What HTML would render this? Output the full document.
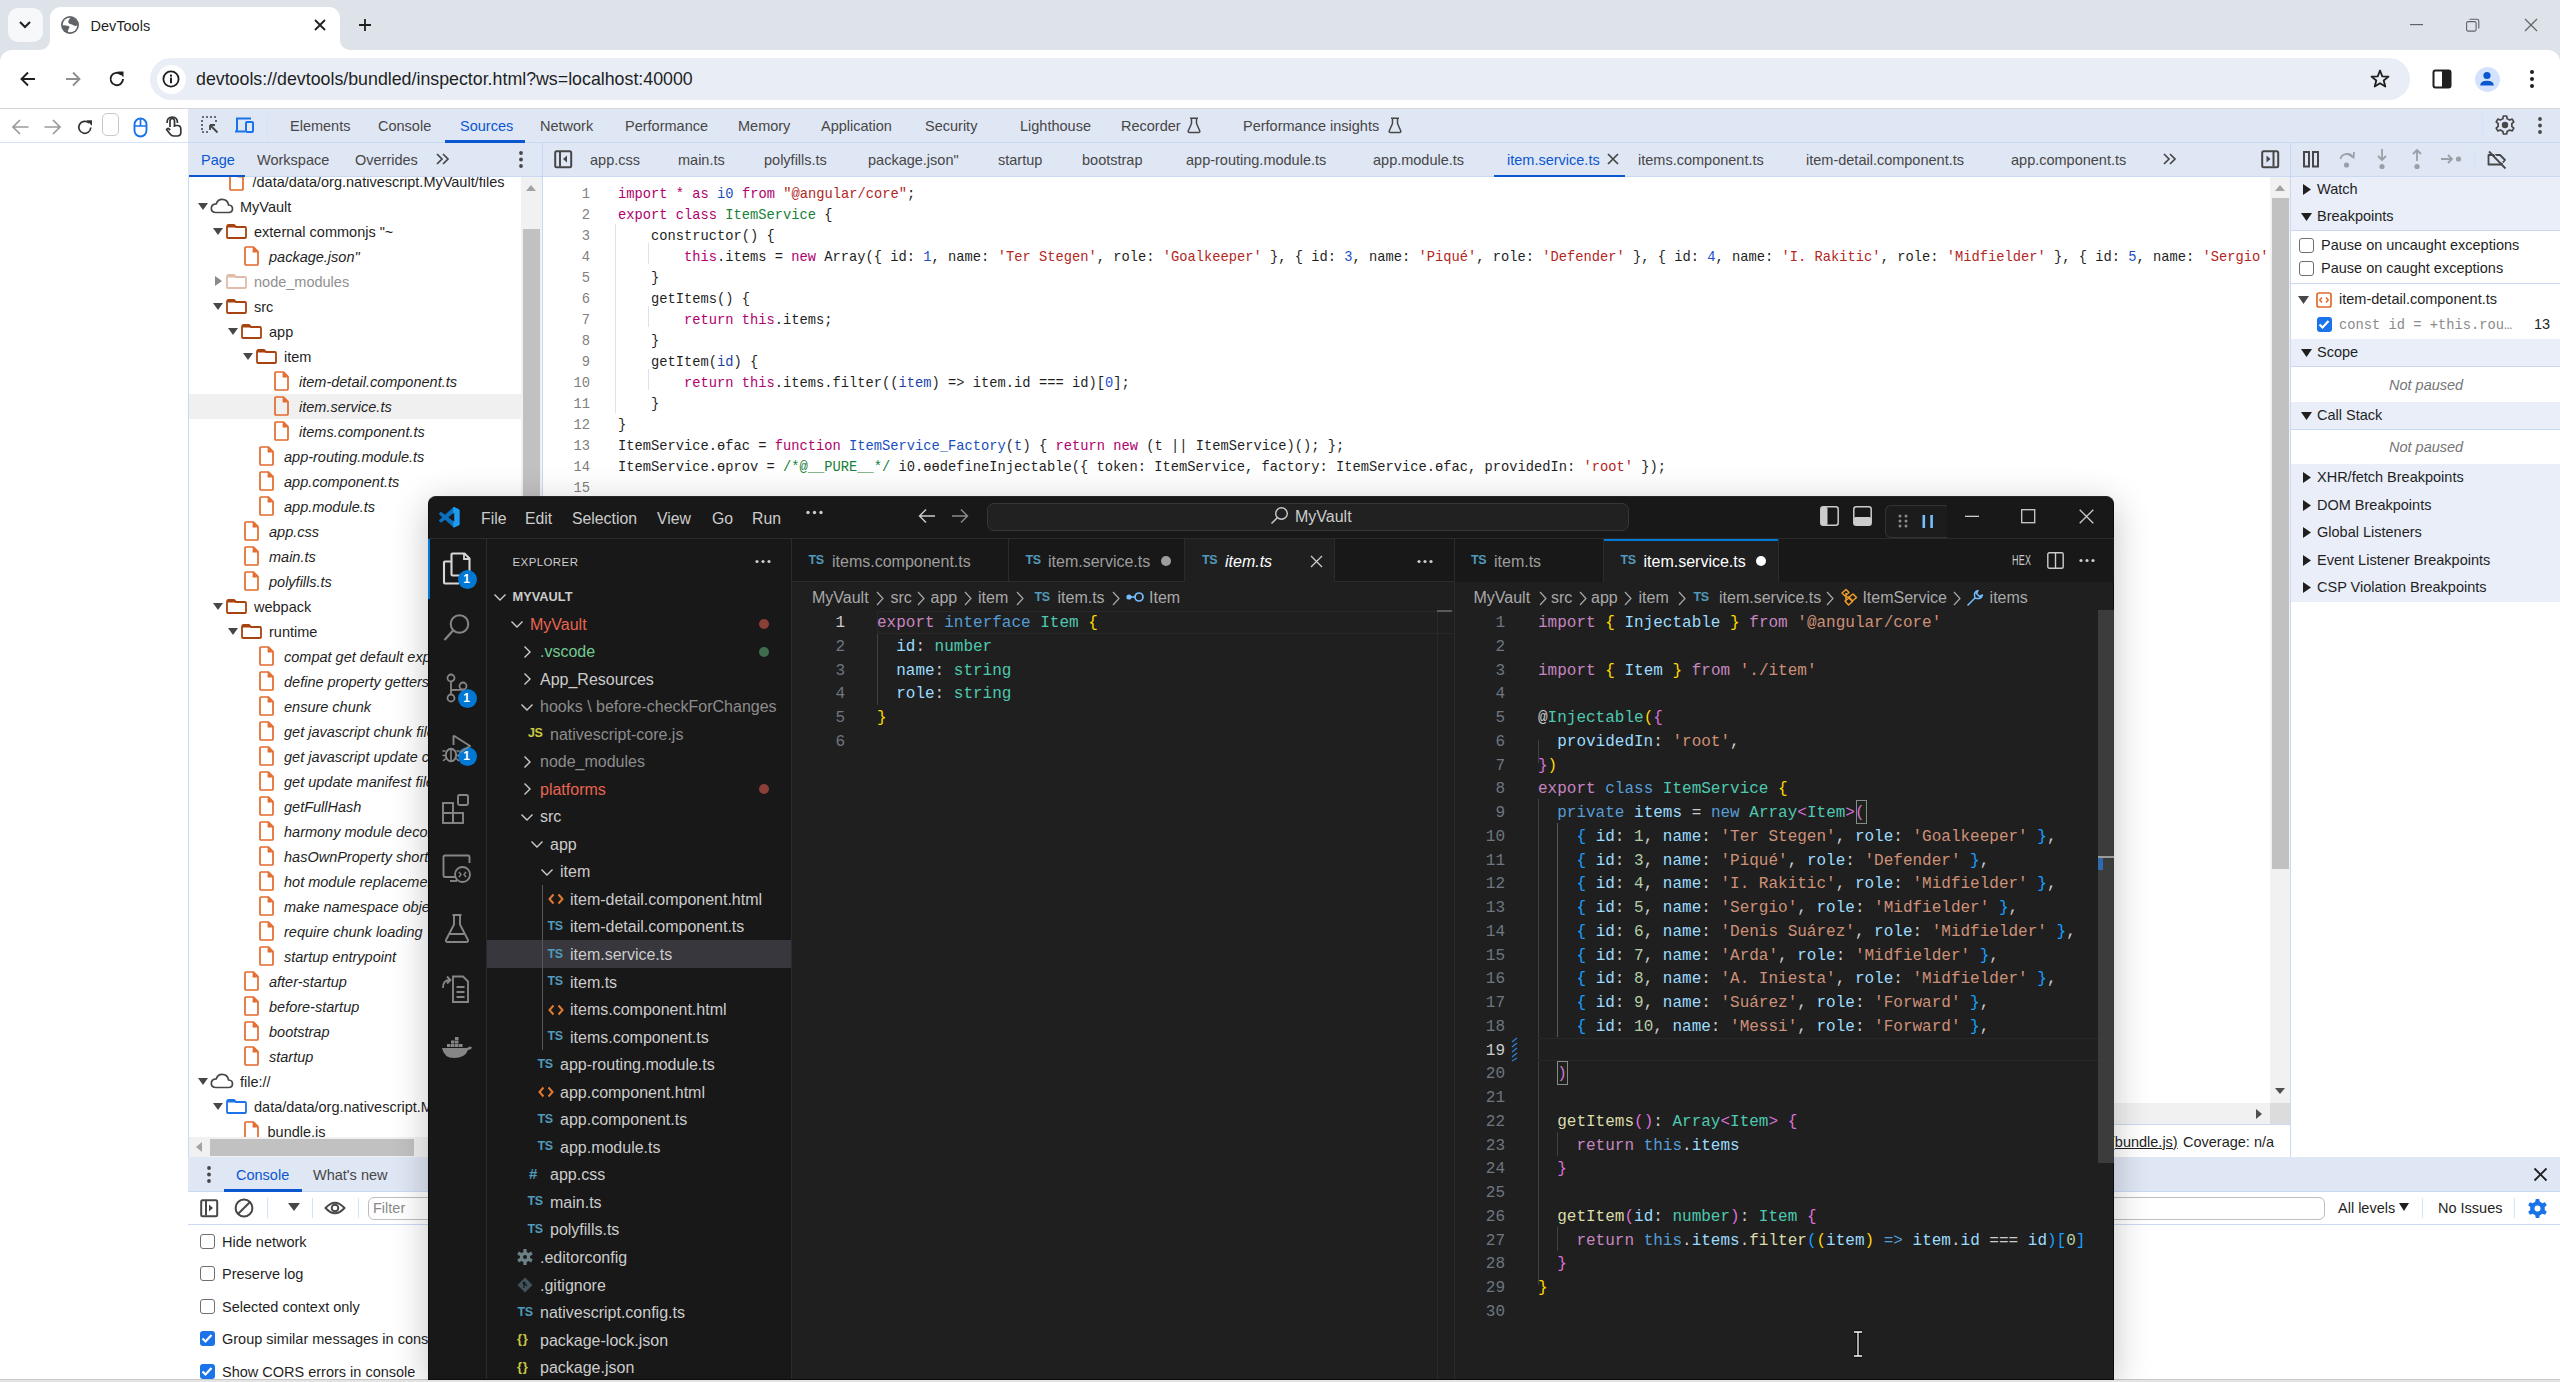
<!DOCTYPE html><html><head><meta charset="utf-8"><style>
html,body{margin:0;padding:0;width:2560px;height:1382px;overflow:hidden;background:#fff;position:relative}
.a{position:absolute;box-sizing:border-box}
svg.a{overflow:visible}
.t{position:absolute;white-space:pre;}
</style></head><body>
<div class="a" style="left:0px;top:0px;width:2560px;height:62px;background:#dee3ea;"></div>
<div class="a" style="left:0px;top:50px;width:2560px;height:58px;background:#fff;border-radius:12px 12px 0 0;"></div>
<div class="a" style="left:40px;top:40px;width:320px;height:10px;background:#fff;"></div>
<div class="a" style="left:30px;top:30px;width:20px;height:20px;background:#dee3ea;border-bottom-right-radius:10px;"></div>
<div class="a" style="left:340px;top:30px;width:20px;height:20px;background:#dee3ea;border-bottom-left-radius:10px;"></div>
<div class="a" style="left:8px;top:8px;width:35px;height:34px;background:#f7f8fa;border-radius:10px;"></div>
<svg class="a" style="left:17px;top:18px;" width="16" height="14" viewBox="0 0 16 14"><path d="M3 4 L8 9 L13 4" fill="none" stroke="#1f1f1f" stroke-width="2"/></svg>
<div class="a" style="left:50px;top:7px;width:290px;height:43px;background:#fff;border-radius:11px 11px 0 0;"></div>
<svg class="a" style="left:61px;top:16px;" width="18" height="18" viewBox="0 0 18 18"><circle cx="9" cy="9" r="9" fill="#5f6368"/><circle cx="9" cy="9" r="7.3" fill="#fff"/><path d="M10 1.5 C8.3 2.8 7 4.8 7.3 6.3 C7.7 8 10 8.2 11.5 8.7 C12.8 9.2 13.5 10 14.3 9.9 C15.2 9.8 16 9.4 16.6 9.2 L16.6 9 A7.6 7.6 0 0 0 10 1.4 Z" fill="#5f6368"/><path d="M1.4 9.2 C3.5 9.2 6 9.3 7.8 10.3 C8.8 11 8.6 12.2 7.6 13 C6.8 13.8 6.8 15 7.3 16.6 A7.6 7.6 0 0 1 1.4 9.2 Z" fill="#5f6368"/></svg>
<div class="t " style="left:90.5px;top:14.80px;height:23px;line-height:23px;font-size:14.5px;color:#1f1f1f;font-family:'Liberation Sans',sans-serif;">DevTools</div>
<svg class="a" style="left:313px;top:18px;" width="14" height="14" viewBox="0 0 14 14"><path d="M2 2 L12 12 M12 2 L2 12" stroke="#1f1f1f" stroke-width="1.8"/></svg>
<svg class="a" style="left:358px;top:18px;" width="14" height="14" viewBox="0 0 14 14"><path d="M7 1 V13 M1 7 H13" stroke="#1f1f1f" stroke-width="1.8"/></svg>
<svg class="a" style="left:2410px;top:24px;" width="14" height="2" viewBox="0 0 14 2"><rect width="13" height="1.2" fill="#5f6368"/></svg>
<svg class="a" style="left:2466px;top:18px;" width="14" height="14" viewBox="0 0 14 14"><rect x="0.6" y="3.6" width="9.5" height="9.5" rx="1.5" fill="none" stroke="#5f6368" stroke-width="1.1"/><path d="M3.5 1.2 H11 Q12.8 1.2 12.8 3 V10.5" fill="none" stroke="#5f6368" stroke-width="1.1"/></svg>
<svg class="a" style="left:2524px;top:18px;" width="14" height="14" viewBox="0 0 14 14"><path d="M1 1 L13 13 M13 1 L1 13" stroke="#5f6368" stroke-width="1.2"/></svg>
<svg class="a" style="left:19px;top:70px;" width="18" height="18" viewBox="0 0 18 18"><path d="M16 9 H3 M9 2.5 L2.5 9 L9 15.5" fill="none" stroke="#1f1f1f" stroke-width="1.9"/></svg>
<svg class="a" style="left:64px;top:70px;" width="18" height="18" viewBox="0 0 18 18"><path d="M2 9 H15 M9 2.5 L15.5 9 L9 15.5" fill="none" stroke="#8f8f8f" stroke-width="1.9"/></svg>
<svg class="a" style="left:108px;top:70px;" width="18" height="18" viewBox="0 0 18 18"><path d="M15 9 A6.2 6.2 0 1 1 13.2 4.6" fill="none" stroke="#1f1f1f" stroke-width="1.9"/><path d="M9.8 1.5 H15.5 V7.2 Z" fill="#1f1f1f"/></svg>
<div class="a" style="left:150px;top:58px;width:2260px;height:42px;background:#e9eef6;border-radius:21px;"></div>
<div class="a" style="left:156.5px;top:64.5px;width:29px;height:29px;background:#fff;border-radius:50%;"></div>
<svg class="a" style="left:162px;top:70px;" width="18" height="18" viewBox="0 0 18 18"><circle cx="9" cy="9" r="7.6" fill="none" stroke="#1f1f1f" stroke-width="1.8"/><rect x="8" y="7.6" width="2" height="5.6" fill="#1f1f1f"/><rect x="8" y="4.6" width="2" height="2" fill="#1f1f1f"/></svg>
<div class="t " style="left:196px;top:65.00px;height:28px;line-height:28px;font-size:17.8px;color:#1f1f1f;font-family:'Liberation Sans',sans-serif;">devtools://devtools/bundled/inspector.html?ws=localhost:40000</div>
<svg class="a" style="left:2369px;top:68px;" width="22" height="22" viewBox="0 0 22 22"><path d="M11 2.5 L13.3 8.3 L19.5 8.6 L14.7 12.5 L16.3 18.6 L11 15.2 L5.7 18.6 L7.3 12.5 L2.5 8.6 L8.7 8.3 Z" fill="none" stroke="#1f1f1f" stroke-width="1.8" stroke-linejoin="round"/></svg>
<svg class="a" style="left:2432px;top:69px;" width="20" height="20" viewBox="0 0 20 20"><rect x="1.5" y="1.5" width="17" height="17" rx="2" fill="none" stroke="#1f1f1f" stroke-width="2"/><rect x="10" y="1.5" width="8.5" height="17" fill="#1f1f1f"/></svg>
<div class="a" style="left:2474.5px;top:66.5px;width:25px;height:25px;background:#d3e3fd;border-radius:50%;"></div>
<svg class="a" style="left:2478px;top:70px;" width="18" height="18" viewBox="0 0 18 18"><circle cx="9" cy="5.5" r="3.6" fill="#0b57d0"/><path d="M2.2 15.5 Q2.2 10.8 9 10.8 Q15.8 10.8 15.8 15.5 Z" fill="#0b57d0"/></svg>
<svg class="a" style="left:2528px;top:69px;" width="8" height="20" viewBox="0 0 8 20"><circle cx="4" cy="3" r="2" fill="#1f1f1f"/><circle cx="4" cy="10" r="2" fill="#1f1f1f"/><circle cx="4" cy="17" r="2" fill="#1f1f1f"/></svg>
<div class="a" style="left:0px;top:108px;width:2560px;height:1px;background:#d6d6d6;"></div>
<div class="a" style="left:0px;top:109px;width:188px;height:33px;background:#fff;"></div>
<div class="a" style="left:0px;top:142px;width:188px;height:1px;background:#d3e3fd;"></div>
<svg class="a" style="left:11px;top:118px;" width="19" height="18" viewBox="0 0 19 18"><path d="M17.5 9 H2.5 M9 2 L2 9 L9 16" fill="none" stroke="#9a9a9a" stroke-width="1.7"/></svg>
<svg class="a" style="left:43px;top:118px;" width="19" height="18" viewBox="0 0 19 18"><path d="M1.5 9 H16.5 M10 2 L17 9 L10 16" fill="none" stroke="#9a9a9a" stroke-width="1.7"/></svg>
<svg class="a" style="left:76px;top:118px;" width="18" height="18" viewBox="0 0 18 18"><path d="M14.8 9.5 A6 6 0 1 1 13 5" fill="none" stroke="#333" stroke-width="1.7"/><path d="M10.3 2.2 H16 V7.8 Z" fill="#333"/></svg>
<div class="a" style="left:102px;top:113px;width:17px;height:23px;border:1px solid #c8c8c8;border-radius:5px;"></div>
<svg class="a" style="left:133px;top:117px;" width="16" height="22" viewBox="0 0 16 22"><rect x="1.5" y="1.5" width="12" height="18" rx="6" fill="none" stroke="#1a73e8" stroke-width="1.9"/><path d="M7.5 2 V9 M2 9 H13" stroke="#1a73e8" stroke-width="1.7"/></svg>
<svg class="a" style="left:163px;top:116px;" width="20" height="22" viewBox="0 0 20 22"><path d="M7 11 V5 Q7 2.5 9.3 2.5 Q11.5 2.5 11.5 5 V11 M11.5 9.5 H14.5 Q17.8 9.5 17.8 13 V16.5 Q17.8 20 14.3 20 H10.5 Q8.5 20 7.3 18.3 L3.5 13.5 L5.3 12.3 L7.2 14 M4 7 Q4 1 9.3 1 Q14.5 1 14.5 7" fill="none" stroke="#333" stroke-width="1.7" stroke-linejoin="round"/></svg>
<div class="a" style="left:188px;top:109px;width:2372px;height:34px;background:#dfe6f4;"></div>
<div class="a" style="left:188px;top:142px;width:2372px;height:1px;background:#cad9f3;"></div>
<svg class="a" style="left:201px;top:116px;" width="19" height="19" viewBox="0 0 19 19"><path d="M1 1 H3 M5 1 H7 M9 1 H11 M13 1 H15 M1 4 V6 M1 8 V10 M1 12 V14 M15 4 V6 M1 16 H3 M5 16 H7" stroke="#474747" stroke-width="1.6"/><path d="M9 9 L16.5 16.5 M9 9 H14 M9 9 V14" fill="none" stroke="#474747" stroke-width="1.8"/></svg>
<svg class="a" style="left:234px;top:116px;" width="23" height="19" viewBox="0 0 23 19"><path d="M3 15.5 V2.5 H17 M1 15.5 H11" fill="none" stroke="#1a73e8" stroke-width="2"/><rect x="12" y="6" width="7" height="10" rx="1" fill="none" stroke="#1a73e8" stroke-width="2"/></svg>
<div class="a" style="left:267px;top:113px;width:1px;height:26px;background:#d3e3fd;"></div>
<div class="t " style="left:290px;top:115.00px;height:23px;line-height:23px;font-size:14.5px;color:#474747;font-family:'Liberation Sans',sans-serif;">Elements</div>
<div class="t " style="left:378px;top:115.00px;height:23px;line-height:23px;font-size:14.5px;color:#474747;font-family:'Liberation Sans',sans-serif;">Console</div>
<div class="t " style="left:460px;top:115.00px;height:23px;line-height:23px;font-size:14.5px;color:#0b57d0;font-family:'Liberation Sans',sans-serif;">Sources</div>
<div class="t " style="left:540px;top:115.00px;height:23px;line-height:23px;font-size:14.5px;color:#474747;font-family:'Liberation Sans',sans-serif;">Network</div>
<div class="t " style="left:625px;top:115.00px;height:23px;line-height:23px;font-size:14.5px;color:#474747;font-family:'Liberation Sans',sans-serif;">Performance</div>
<div class="t " style="left:738px;top:115.00px;height:23px;line-height:23px;font-size:14.5px;color:#474747;font-family:'Liberation Sans',sans-serif;">Memory</div>
<div class="t " style="left:821px;top:115.00px;height:23px;line-height:23px;font-size:14.5px;color:#474747;font-family:'Liberation Sans',sans-serif;">Application</div>
<div class="t " style="left:925px;top:115.00px;height:23px;line-height:23px;font-size:14.5px;color:#474747;font-family:'Liberation Sans',sans-serif;">Security</div>
<div class="t " style="left:1020px;top:115.00px;height:23px;line-height:23px;font-size:14.5px;color:#474747;font-family:'Liberation Sans',sans-serif;">Lighthouse</div>
<div class="t " style="left:1121px;top:115.00px;height:23px;line-height:23px;font-size:14.5px;color:#474747;font-family:'Liberation Sans',sans-serif;">Recorder</div>
<div class="t " style="left:1243px;top:115.00px;height:23px;line-height:23px;font-size:14.5px;color:#474747;font-family:'Liberation Sans',sans-serif;">Performance insights</div>
<div class="a" style="left:445px;top:140px;width:80px;height:3px;background:#0b57d0;"></div>
<svg class="a" style="left:1187px;top:117px;" width="14" height="17" viewBox="0 0 14 17"><path d="M4.5 1.5 V6.5 L1.2 14 Q1 15.5 2.5 15.5 H11.5 Q13 15.5 12.8 14 L9.5 6.5 V1.5 M3 1.2 H11" fill="none" stroke="#474747" stroke-width="1.5" stroke-linejoin="round"/></svg>
<svg class="a" style="left:1388px;top:117px;" width="14" height="17" viewBox="0 0 14 17"><path d="M4.5 1.5 V6.5 L1.2 14 Q1 15.5 2.5 15.5 H11.5 Q13 15.5 12.8 14 L9.5 6.5 V1.5 M3 1.2 H11" fill="none" stroke="#474747" stroke-width="1.5" stroke-linejoin="round"/></svg>
<div class="a" style="left:2482px;top:113px;width:1px;height:26px;background:#d3e3fd;"></div>
<svg class="a" style="left:2494px;top:114px;" width="22" height="22" viewBox="0 0 22 22"><g transform="translate(11 11)"><path d="M-1.6 -9 H1.6 L2.2 -6.3 Q3.6 -5.8 4.6 -5 L7.2 -5.9 L8.8 -3.1 L6.8 -1.3 Q7 0 6.8 1.3 L8.8 3.1 L7.2 5.9 L4.6 5 Q3.6 5.8 2.2 6.3 L1.6 9 H-1.6 L-2.2 6.3 Q-3.6 5.8 -4.6 5 L-7.2 5.9 L-8.8 3.1 L-6.8 1.3 Q-7 0 -6.8 -1.3 L-8.8 -3.1 L-7.2 -5.9 L-4.6 -5 Q-3.6 -5.8 -2.2 -6.3 Z" fill="none" stroke="#474747" stroke-width="1.7" stroke-linejoin="round"/><circle r="3.2" fill="#474747"/></g></svg>
<svg class="a" style="left:2536px;top:116px;" width="8" height="19" viewBox="0 0 8 19"><circle cx="4" cy="3" r="1.9" fill="#474747"/><circle cx="4" cy="9.5" r="1.9" fill="#474747"/><circle cx="4" cy="16" r="1.9" fill="#474747"/></svg>
<div class="a" style="left:188px;top:143px;width:355px;height:34px;background:#dfe6f4;"></div>
<div class="a" style="left:188px;top:176px;width:2372px;height:1px;background:#cad9f3;"></div>
<div class="a" style="left:542px;top:143px;width:1px;height:1014px;background:#cad9f3;"></div>
<div class="t " style="left:201px;top:148.50px;height:23px;line-height:23px;font-size:14.5px;color:#0b57d0;font-family:'Liberation Sans',sans-serif;">Page</div>
<div class="a" style="left:189px;top:174.8px;width:56px;height:2.2px;background:#0b57d0;"></div>
<div class="t " style="left:257px;top:148.50px;height:23px;line-height:23px;font-size:14.5px;color:#474747;font-family:'Liberation Sans',sans-serif;">Workspace</div>
<div class="t " style="left:355px;top:148.50px;height:23px;line-height:23px;font-size:14.5px;color:#474747;font-family:'Liberation Sans',sans-serif;">Overrides</div>
<svg class="a" style="left:435px;top:152px;" width="16" height="14" viewBox="0 0 16 14"><path d="M2 2 L7 7 L2 12 M8 2 L13 7 L8 12" fill="none" stroke="#474747" stroke-width="1.7"/></svg>
<svg class="a" style="left:517px;top:150px;" width="8" height="19" viewBox="0 0 8 19"><circle cx="4" cy="3" r="1.9" fill="#474747"/><circle cx="4" cy="9.5" r="1.9" fill="#474747"/><circle cx="4" cy="16" r="1.9" fill="#474747"/></svg>
<div class="a" style="left:188px;top:177px;width:354px;height:980px;background:#fff;"></div>
<div class="a" style="left:188px;top:177px;width:1px;height:980px;background:#cad9f3;"></div>
<div class="a" style="left:189px;top:393.5px;width:332px;height:25px;background:#f0f0f0;"></div>
<div class="a" style="left:189px;top:177px;width:332px;height:960px;overflow:hidden">
<svg class="a" style="left:39.5px;top:-6.5px;" width="15" height="20" viewBox="0 0 15 20"><path d="M1 2 Q1 1 2 1 H9.5 L14 5.5 V18 Q14 19 13 19 H2 Q1 19 1 18 Z" fill="none" stroke="#e36a2c" stroke-width="1.7" stroke-linejoin="round"/><path d="M8.6 1 V6.4 H14 Z" fill="#e36a2c"/></svg>
<div class="t " style="left:63.5px;top:-6.50px;height:23px;line-height:23px;font-size:14.5px;color:#1f1f1f;font-family:'Liberation Sans',sans-serif;">/data/data/org.nativescript.MyVault/files</div>
<svg class="a" style="left:9px;top:25.5px;" width="10" height="7" viewBox="0 0 10 7"><path d="M0 0 H10 L5 7 Z" fill="#474747"/></svg>
<svg class="a" style="left:21px;top:20.5px;" width="24" height="16" viewBox="0 0 24 16"><path d="M6 14.5 H18.5 Q22.5 14.5 22.5 10.8 Q22.5 7.2 18.6 7 Q17.5 1.3 12 1.3 Q7.7 1.3 6.3 5.8 Q1.3 6.2 1.3 10.2 Q1.3 14.5 6 14.5 Z" fill="none" stroke="#474747" stroke-width="1.7"/></svg>
<div class="t " style="left:51px;top:18.50px;height:23px;line-height:23px;font-size:14.5px;color:#1f1f1f;font-family:'Liberation Sans',sans-serif;">MyVault</div>
<svg class="a" style="left:24px;top:50.5px;" width="10" height="7" viewBox="0 0 10 7"><path d="M0 0 H10 L5 7 Z" fill="#474747"/></svg>
<svg class="a" style="left:37px;top:46.5px;" width="21" height="15" viewBox="0 0 21 15"><g opacity="1"><path d="M1 3 Q1 1 2.5 1 H8 L10 3 H19 Q20 3 20 4.5 V13 Q20 14 19 14 H2 Q1 14 1 13 Z" fill="none" stroke="#a8420f" stroke-width="1.8" stroke-linejoin="round"/><path d="M1 1 H8 L10 3.4 H1 Z" fill="#a8420f"/></g></svg>
<div class="t " style="left:65px;top:43.50px;height:23px;line-height:23px;font-size:14.5px;color:#1f1f1f;font-family:'Liberation Sans',sans-serif;">external commonjs "~</div>
<svg class="a" style="left:54.5px;top:68.5px;" width="15" height="20" viewBox="0 0 15 20"><path d="M1 2 Q1 1 2 1 H9.5 L14 5.5 V18 Q14 19 13 19 H2 Q1 19 1 18 Z" fill="none" stroke="#e36a2c" stroke-width="1.7" stroke-linejoin="round"/><path d="M8.6 1 V6.4 H14 Z" fill="#e36a2c"/></svg>
<div class="t " style="left:80.0px;top:68.50px;height:23px;line-height:23px;font-size:14.5px;color:#1f1f1f;font-family:'Liberation Sans',sans-serif;font-style:italic;">package.json"</div>
<svg class="a" style="left:26px;top:99px;" width="7" height="10" viewBox="0 0 7 10"><path d="M0 0 V10 L7 5 Z" fill="#8a8a8a"/></svg>
<svg class="a" style="left:37px;top:96.5px;" width="21" height="15" viewBox="0 0 21 15"><g opacity="0.35"><path d="M1 3 Q1 1 2.5 1 H8 L10 3 H19 Q20 3 20 4.5 V13 Q20 14 19 14 H2 Q1 14 1 13 Z" fill="none" stroke="#a8420f" stroke-width="1.8" stroke-linejoin="round"/><path d="M1 1 H8 L10 3.4 H1 Z" fill="#a8420f"/></g></svg>
<div class="t " style="left:65px;top:93.50px;height:23px;line-height:23px;font-size:14.5px;color:#8f8f8f;font-family:'Liberation Sans',sans-serif;">node_modules</div>
<svg class="a" style="left:24px;top:125.5px;" width="10" height="7" viewBox="0 0 10 7"><path d="M0 0 H10 L5 7 Z" fill="#474747"/></svg>
<svg class="a" style="left:37px;top:121.5px;" width="21" height="15" viewBox="0 0 21 15"><g opacity="1"><path d="M1 3 Q1 1 2.5 1 H8 L10 3 H19 Q20 3 20 4.5 V13 Q20 14 19 14 H2 Q1 14 1 13 Z" fill="none" stroke="#a8420f" stroke-width="1.8" stroke-linejoin="round"/><path d="M1 1 H8 L10 3.4 H1 Z" fill="#a8420f"/></g></svg>
<div class="t " style="left:65px;top:118.50px;height:23px;line-height:23px;font-size:14.5px;color:#1f1f1f;font-family:'Liberation Sans',sans-serif;">src</div>
<svg class="a" style="left:39px;top:150.5px;" width="10" height="7" viewBox="0 0 10 7"><path d="M0 0 H10 L5 7 Z" fill="#474747"/></svg>
<svg class="a" style="left:52px;top:146.5px;" width="21" height="15" viewBox="0 0 21 15"><g opacity="1"><path d="M1 3 Q1 1 2.5 1 H8 L10 3 H19 Q20 3 20 4.5 V13 Q20 14 19 14 H2 Q1 14 1 13 Z" fill="none" stroke="#a8420f" stroke-width="1.8" stroke-linejoin="round"/><path d="M1 1 H8 L10 3.4 H1 Z" fill="#a8420f"/></g></svg>
<div class="t " style="left:80px;top:143.50px;height:23px;line-height:23px;font-size:14.5px;color:#1f1f1f;font-family:'Liberation Sans',sans-serif;">app</div>
<svg class="a" style="left:54px;top:175.5px;" width="10" height="7" viewBox="0 0 10 7"><path d="M0 0 H10 L5 7 Z" fill="#474747"/></svg>
<svg class="a" style="left:67px;top:171.5px;" width="21" height="15" viewBox="0 0 21 15"><g opacity="1"><path d="M1 3 Q1 1 2.5 1 H8 L10 3 H19 Q20 3 20 4.5 V13 Q20 14 19 14 H2 Q1 14 1 13 Z" fill="none" stroke="#a8420f" stroke-width="1.8" stroke-linejoin="round"/><path d="M1 1 H8 L10 3.4 H1 Z" fill="#a8420f"/></g></svg>
<div class="t " style="left:95px;top:168.50px;height:23px;line-height:23px;font-size:14.5px;color:#1f1f1f;font-family:'Liberation Sans',sans-serif;">item</div>
<svg class="a" style="left:84.5px;top:193.5px;" width="15" height="20" viewBox="0 0 15 20"><path d="M1 2 Q1 1 2 1 H9.5 L14 5.5 V18 Q14 19 13 19 H2 Q1 19 1 18 Z" fill="none" stroke="#e36a2c" stroke-width="1.7" stroke-linejoin="round"/><path d="M8.6 1 V6.4 H14 Z" fill="#e36a2c"/></svg>
<div class="t " style="left:110.0px;top:193.50px;height:23px;line-height:23px;font-size:14.5px;color:#1f1f1f;font-family:'Liberation Sans',sans-serif;font-style:italic;">item-detail.component.ts</div>
<svg class="a" style="left:84.5px;top:218.5px;" width="15" height="20" viewBox="0 0 15 20"><path d="M1 2 Q1 1 2 1 H9.5 L14 5.5 V18 Q14 19 13 19 H2 Q1 19 1 18 Z" fill="none" stroke="#e36a2c" stroke-width="1.7" stroke-linejoin="round"/><path d="M8.6 1 V6.4 H14 Z" fill="#e36a2c"/></svg>
<div class="t " style="left:110.0px;top:218.50px;height:23px;line-height:23px;font-size:14.5px;color:#1f1f1f;font-family:'Liberation Sans',sans-serif;font-style:italic;">item.service.ts</div>
<svg class="a" style="left:84.5px;top:243.5px;" width="15" height="20" viewBox="0 0 15 20"><path d="M1 2 Q1 1 2 1 H9.5 L14 5.5 V18 Q14 19 13 19 H2 Q1 19 1 18 Z" fill="none" stroke="#e36a2c" stroke-width="1.7" stroke-linejoin="round"/><path d="M8.6 1 V6.4 H14 Z" fill="#e36a2c"/></svg>
<div class="t " style="left:110.0px;top:243.50px;height:23px;line-height:23px;font-size:14.5px;color:#1f1f1f;font-family:'Liberation Sans',sans-serif;font-style:italic;">items.component.ts</div>
<svg class="a" style="left:69.5px;top:268.5px;" width="15" height="20" viewBox="0 0 15 20"><path d="M1 2 Q1 1 2 1 H9.5 L14 5.5 V18 Q14 19 13 19 H2 Q1 19 1 18 Z" fill="none" stroke="#e36a2c" stroke-width="1.7" stroke-linejoin="round"/><path d="M8.6 1 V6.4 H14 Z" fill="#e36a2c"/></svg>
<div class="t " style="left:95.0px;top:268.50px;height:23px;line-height:23px;font-size:14.5px;color:#1f1f1f;font-family:'Liberation Sans',sans-serif;font-style:italic;">app-routing.module.ts</div>
<svg class="a" style="left:69.5px;top:293.5px;" width="15" height="20" viewBox="0 0 15 20"><path d="M1 2 Q1 1 2 1 H9.5 L14 5.5 V18 Q14 19 13 19 H2 Q1 19 1 18 Z" fill="none" stroke="#e36a2c" stroke-width="1.7" stroke-linejoin="round"/><path d="M8.6 1 V6.4 H14 Z" fill="#e36a2c"/></svg>
<div class="t " style="left:95.0px;top:293.50px;height:23px;line-height:23px;font-size:14.5px;color:#1f1f1f;font-family:'Liberation Sans',sans-serif;font-style:italic;">app.component.ts</div>
<svg class="a" style="left:69.5px;top:318.5px;" width="15" height="20" viewBox="0 0 15 20"><path d="M1 2 Q1 1 2 1 H9.5 L14 5.5 V18 Q14 19 13 19 H2 Q1 19 1 18 Z" fill="none" stroke="#e36a2c" stroke-width="1.7" stroke-linejoin="round"/><path d="M8.6 1 V6.4 H14 Z" fill="#e36a2c"/></svg>
<div class="t " style="left:95.0px;top:318.50px;height:23px;line-height:23px;font-size:14.5px;color:#1f1f1f;font-family:'Liberation Sans',sans-serif;font-style:italic;">app.module.ts</div>
<svg class="a" style="left:54.5px;top:343.5px;" width="15" height="20" viewBox="0 0 15 20"><path d="M1 2 Q1 1 2 1 H9.5 L14 5.5 V18 Q14 19 13 19 H2 Q1 19 1 18 Z" fill="none" stroke="#e36a2c" stroke-width="1.7" stroke-linejoin="round"/><path d="M8.6 1 V6.4 H14 Z" fill="#e36a2c"/></svg>
<div class="t " style="left:80.0px;top:343.50px;height:23px;line-height:23px;font-size:14.5px;color:#1f1f1f;font-family:'Liberation Sans',sans-serif;font-style:italic;">app.css</div>
<svg class="a" style="left:54.5px;top:368.5px;" width="15" height="20" viewBox="0 0 15 20"><path d="M1 2 Q1 1 2 1 H9.5 L14 5.5 V18 Q14 19 13 19 H2 Q1 19 1 18 Z" fill="none" stroke="#e36a2c" stroke-width="1.7" stroke-linejoin="round"/><path d="M8.6 1 V6.4 H14 Z" fill="#e36a2c"/></svg>
<div class="t " style="left:80.0px;top:368.50px;height:23px;line-height:23px;font-size:14.5px;color:#1f1f1f;font-family:'Liberation Sans',sans-serif;font-style:italic;">main.ts</div>
<svg class="a" style="left:54.5px;top:393.5px;" width="15" height="20" viewBox="0 0 15 20"><path d="M1 2 Q1 1 2 1 H9.5 L14 5.5 V18 Q14 19 13 19 H2 Q1 19 1 18 Z" fill="none" stroke="#e36a2c" stroke-width="1.7" stroke-linejoin="round"/><path d="M8.6 1 V6.4 H14 Z" fill="#e36a2c"/></svg>
<div class="t " style="left:80.0px;top:393.50px;height:23px;line-height:23px;font-size:14.5px;color:#1f1f1f;font-family:'Liberation Sans',sans-serif;font-style:italic;">polyfills.ts</div>
<svg class="a" style="left:24px;top:425.5px;" width="10" height="7" viewBox="0 0 10 7"><path d="M0 0 H10 L5 7 Z" fill="#474747"/></svg>
<svg class="a" style="left:37px;top:421.5px;" width="21" height="15" viewBox="0 0 21 15"><g opacity="1"><path d="M1 3 Q1 1 2.5 1 H8 L10 3 H19 Q20 3 20 4.5 V13 Q20 14 19 14 H2 Q1 14 1 13 Z" fill="none" stroke="#a8420f" stroke-width="1.8" stroke-linejoin="round"/><path d="M1 1 H8 L10 3.4 H1 Z" fill="#a8420f"/></g></svg>
<div class="t " style="left:65px;top:418.50px;height:23px;line-height:23px;font-size:14.5px;color:#1f1f1f;font-family:'Liberation Sans',sans-serif;">webpack</div>
<svg class="a" style="left:39px;top:450.5px;" width="10" height="7" viewBox="0 0 10 7"><path d="M0 0 H10 L5 7 Z" fill="#474747"/></svg>
<svg class="a" style="left:52px;top:446.5px;" width="21" height="15" viewBox="0 0 21 15"><g opacity="1"><path d="M1 3 Q1 1 2.5 1 H8 L10 3 H19 Q20 3 20 4.5 V13 Q20 14 19 14 H2 Q1 14 1 13 Z" fill="none" stroke="#a8420f" stroke-width="1.8" stroke-linejoin="round"/><path d="M1 1 H8 L10 3.4 H1 Z" fill="#a8420f"/></g></svg>
<div class="t " style="left:80px;top:443.50px;height:23px;line-height:23px;font-size:14.5px;color:#1f1f1f;font-family:'Liberation Sans',sans-serif;">runtime</div>
<svg class="a" style="left:69.5px;top:468.5px;" width="15" height="20" viewBox="0 0 15 20"><path d="M1 2 Q1 1 2 1 H9.5 L14 5.5 V18 Q14 19 13 19 H2 Q1 19 1 18 Z" fill="none" stroke="#e36a2c" stroke-width="1.7" stroke-linejoin="round"/><path d="M8.6 1 V6.4 H14 Z" fill="#e36a2c"/></svg>
<div class="t " style="left:95.0px;top:468.50px;height:23px;line-height:23px;font-size:14.5px;color:#1f1f1f;font-family:'Liberation Sans',sans-serif;font-style:italic;">compat get default export</div>
<svg class="a" style="left:69.5px;top:493.5px;" width="15" height="20" viewBox="0 0 15 20"><path d="M1 2 Q1 1 2 1 H9.5 L14 5.5 V18 Q14 19 13 19 H2 Q1 19 1 18 Z" fill="none" stroke="#e36a2c" stroke-width="1.7" stroke-linejoin="round"/><path d="M8.6 1 V6.4 H14 Z" fill="#e36a2c"/></svg>
<div class="t " style="left:95.0px;top:493.50px;height:23px;line-height:23px;font-size:14.5px;color:#1f1f1f;font-family:'Liberation Sans',sans-serif;font-style:italic;">define property getters</div>
<svg class="a" style="left:69.5px;top:518.5px;" width="15" height="20" viewBox="0 0 15 20"><path d="M1 2 Q1 1 2 1 H9.5 L14 5.5 V18 Q14 19 13 19 H2 Q1 19 1 18 Z" fill="none" stroke="#e36a2c" stroke-width="1.7" stroke-linejoin="round"/><path d="M8.6 1 V6.4 H14 Z" fill="#e36a2c"/></svg>
<div class="t " style="left:95.0px;top:518.50px;height:23px;line-height:23px;font-size:14.5px;color:#1f1f1f;font-family:'Liberation Sans',sans-serif;font-style:italic;">ensure chunk</div>
<svg class="a" style="left:69.5px;top:543.5px;" width="15" height="20" viewBox="0 0 15 20"><path d="M1 2 Q1 1 2 1 H9.5 L14 5.5 V18 Q14 19 13 19 H2 Q1 19 1 18 Z" fill="none" stroke="#e36a2c" stroke-width="1.7" stroke-linejoin="round"/><path d="M8.6 1 V6.4 H14 Z" fill="#e36a2c"/></svg>
<div class="t " style="left:95.0px;top:543.50px;height:23px;line-height:23px;font-size:14.5px;color:#1f1f1f;font-family:'Liberation Sans',sans-serif;font-style:italic;">get javascript chunk filename</div>
<svg class="a" style="left:69.5px;top:568.5px;" width="15" height="20" viewBox="0 0 15 20"><path d="M1 2 Q1 1 2 1 H9.5 L14 5.5 V18 Q14 19 13 19 H2 Q1 19 1 18 Z" fill="none" stroke="#e36a2c" stroke-width="1.7" stroke-linejoin="round"/><path d="M8.6 1 V6.4 H14 Z" fill="#e36a2c"/></svg>
<div class="t " style="left:95.0px;top:568.50px;height:23px;line-height:23px;font-size:14.5px;color:#1f1f1f;font-family:'Liberation Sans',sans-serif;font-style:italic;">get javascript update chunk filename</div>
<svg class="a" style="left:69.5px;top:593.5px;" width="15" height="20" viewBox="0 0 15 20"><path d="M1 2 Q1 1 2 1 H9.5 L14 5.5 V18 Q14 19 13 19 H2 Q1 19 1 18 Z" fill="none" stroke="#e36a2c" stroke-width="1.7" stroke-linejoin="round"/><path d="M8.6 1 V6.4 H14 Z" fill="#e36a2c"/></svg>
<div class="t " style="left:95.0px;top:593.50px;height:23px;line-height:23px;font-size:14.5px;color:#1f1f1f;font-family:'Liberation Sans',sans-serif;font-style:italic;">get update manifest filename</div>
<svg class="a" style="left:69.5px;top:618.5px;" width="15" height="20" viewBox="0 0 15 20"><path d="M1 2 Q1 1 2 1 H9.5 L14 5.5 V18 Q14 19 13 19 H2 Q1 19 1 18 Z" fill="none" stroke="#e36a2c" stroke-width="1.7" stroke-linejoin="round"/><path d="M8.6 1 V6.4 H14 Z" fill="#e36a2c"/></svg>
<div class="t " style="left:95.0px;top:618.50px;height:23px;line-height:23px;font-size:14.5px;color:#1f1f1f;font-family:'Liberation Sans',sans-serif;font-style:italic;">getFullHash</div>
<svg class="a" style="left:69.5px;top:643.5px;" width="15" height="20" viewBox="0 0 15 20"><path d="M1 2 Q1 1 2 1 H9.5 L14 5.5 V18 Q14 19 13 19 H2 Q1 19 1 18 Z" fill="none" stroke="#e36a2c" stroke-width="1.7" stroke-linejoin="round"/><path d="M8.6 1 V6.4 H14 Z" fill="#e36a2c"/></svg>
<div class="t " style="left:95.0px;top:643.50px;height:23px;line-height:23px;font-size:14.5px;color:#1f1f1f;font-family:'Liberation Sans',sans-serif;font-style:italic;">harmony module decorator</div>
<svg class="a" style="left:69.5px;top:668.5px;" width="15" height="20" viewBox="0 0 15 20"><path d="M1 2 Q1 1 2 1 H9.5 L14 5.5 V18 Q14 19 13 19 H2 Q1 19 1 18 Z" fill="none" stroke="#e36a2c" stroke-width="1.7" stroke-linejoin="round"/><path d="M8.6 1 V6.4 H14 Z" fill="#e36a2c"/></svg>
<div class="t " style="left:95.0px;top:668.50px;height:23px;line-height:23px;font-size:14.5px;color:#1f1f1f;font-family:'Liberation Sans',sans-serif;font-style:italic;">hasOwnProperty shorthand</div>
<svg class="a" style="left:69.5px;top:693.5px;" width="15" height="20" viewBox="0 0 15 20"><path d="M1 2 Q1 1 2 1 H9.5 L14 5.5 V18 Q14 19 13 19 H2 Q1 19 1 18 Z" fill="none" stroke="#e36a2c" stroke-width="1.7" stroke-linejoin="round"/><path d="M8.6 1 V6.4 H14 Z" fill="#e36a2c"/></svg>
<div class="t " style="left:95.0px;top:693.50px;height:23px;line-height:23px;font-size:14.5px;color:#1f1f1f;font-family:'Liberation Sans',sans-serif;font-style:italic;">hot module replacement</div>
<svg class="a" style="left:69.5px;top:718.5px;" width="15" height="20" viewBox="0 0 15 20"><path d="M1 2 Q1 1 2 1 H9.5 L14 5.5 V18 Q14 19 13 19 H2 Q1 19 1 18 Z" fill="none" stroke="#e36a2c" stroke-width="1.7" stroke-linejoin="round"/><path d="M8.6 1 V6.4 H14 Z" fill="#e36a2c"/></svg>
<div class="t " style="left:95.0px;top:718.50px;height:23px;line-height:23px;font-size:14.5px;color:#1f1f1f;font-family:'Liberation Sans',sans-serif;font-style:italic;">make namespace object</div>
<svg class="a" style="left:69.5px;top:743.5px;" width="15" height="20" viewBox="0 0 15 20"><path d="M1 2 Q1 1 2 1 H9.5 L14 5.5 V18 Q14 19 13 19 H2 Q1 19 1 18 Z" fill="none" stroke="#e36a2c" stroke-width="1.7" stroke-linejoin="round"/><path d="M8.6 1 V6.4 H14 Z" fill="#e36a2c"/></svg>
<div class="t " style="left:95.0px;top:743.50px;height:23px;line-height:23px;font-size:14.5px;color:#1f1f1f;font-family:'Liberation Sans',sans-serif;font-style:italic;">require chunk loading</div>
<svg class="a" style="left:69.5px;top:768.5px;" width="15" height="20" viewBox="0 0 15 20"><path d="M1 2 Q1 1 2 1 H9.5 L14 5.5 V18 Q14 19 13 19 H2 Q1 19 1 18 Z" fill="none" stroke="#e36a2c" stroke-width="1.7" stroke-linejoin="round"/><path d="M8.6 1 V6.4 H14 Z" fill="#e36a2c"/></svg>
<div class="t " style="left:95.0px;top:768.50px;height:23px;line-height:23px;font-size:14.5px;color:#1f1f1f;font-family:'Liberation Sans',sans-serif;font-style:italic;">startup entrypoint</div>
<svg class="a" style="left:54.5px;top:793.5px;" width="15" height="20" viewBox="0 0 15 20"><path d="M1 2 Q1 1 2 1 H9.5 L14 5.5 V18 Q14 19 13 19 H2 Q1 19 1 18 Z" fill="none" stroke="#e36a2c" stroke-width="1.7" stroke-linejoin="round"/><path d="M8.6 1 V6.4 H14 Z" fill="#e36a2c"/></svg>
<div class="t " style="left:80.0px;top:793.50px;height:23px;line-height:23px;font-size:14.5px;color:#1f1f1f;font-family:'Liberation Sans',sans-serif;font-style:italic;">after-startup</div>
<svg class="a" style="left:54.5px;top:818.5px;" width="15" height="20" viewBox="0 0 15 20"><path d="M1 2 Q1 1 2 1 H9.5 L14 5.5 V18 Q14 19 13 19 H2 Q1 19 1 18 Z" fill="none" stroke="#e36a2c" stroke-width="1.7" stroke-linejoin="round"/><path d="M8.6 1 V6.4 H14 Z" fill="#e36a2c"/></svg>
<div class="t " style="left:80.0px;top:818.50px;height:23px;line-height:23px;font-size:14.5px;color:#1f1f1f;font-family:'Liberation Sans',sans-serif;font-style:italic;">before-startup</div>
<svg class="a" style="left:54.5px;top:843.5px;" width="15" height="20" viewBox="0 0 15 20"><path d="M1 2 Q1 1 2 1 H9.5 L14 5.5 V18 Q14 19 13 19 H2 Q1 19 1 18 Z" fill="none" stroke="#e36a2c" stroke-width="1.7" stroke-linejoin="round"/><path d="M8.6 1 V6.4 H14 Z" fill="#e36a2c"/></svg>
<div class="t " style="left:80.0px;top:843.50px;height:23px;line-height:23px;font-size:14.5px;color:#1f1f1f;font-family:'Liberation Sans',sans-serif;font-style:italic;">bootstrap</div>
<svg class="a" style="left:54.5px;top:868.5px;" width="15" height="20" viewBox="0 0 15 20"><path d="M1 2 Q1 1 2 1 H9.5 L14 5.5 V18 Q14 19 13 19 H2 Q1 19 1 18 Z" fill="none" stroke="#e36a2c" stroke-width="1.7" stroke-linejoin="round"/><path d="M8.6 1 V6.4 H14 Z" fill="#e36a2c"/></svg>
<div class="t " style="left:80.0px;top:868.50px;height:23px;line-height:23px;font-size:14.5px;color:#1f1f1f;font-family:'Liberation Sans',sans-serif;font-style:italic;">startup</div>
<svg class="a" style="left:9px;top:900.5px;" width="10" height="7" viewBox="0 0 10 7"><path d="M0 0 H10 L5 7 Z" fill="#474747"/></svg>
<svg class="a" style="left:21px;top:895.5px;" width="24" height="16" viewBox="0 0 24 16"><path d="M6 14.5 H18.5 Q22.5 14.5 22.5 10.8 Q22.5 7.2 18.6 7 Q17.5 1.3 12 1.3 Q7.7 1.3 6.3 5.8 Q1.3 6.2 1.3 10.2 Q1.3 14.5 6 14.5 Z" fill="none" stroke="#474747" stroke-width="1.7"/></svg>
<div class="t " style="left:51px;top:893.50px;height:23px;line-height:23px;font-size:14.5px;color:#1f1f1f;font-family:'Liberation Sans',sans-serif;">file://</div>
<svg class="a" style="left:24px;top:925.5px;" width="10" height="7" viewBox="0 0 10 7"><path d="M0 0 H10 L5 7 Z" fill="#474747"/></svg>
<svg class="a" style="left:37px;top:921.5px;" width="21" height="15" viewBox="0 0 21 15"><g opacity="1"><path d="M1 3 Q1 1 2.5 1 H8 L10 3 H19 Q20 3 20 4.5 V13 Q20 14 19 14 H2 Q1 14 1 13 Z" fill="none" stroke="#1a73e8" stroke-width="1.8" stroke-linejoin="round"/><path d="M1 1 H8 L10 3.4 H1 Z" fill="#1a73e8"/></g></svg>
<div class="t " style="left:65px;top:918.50px;height:23px;line-height:23px;font-size:14.5px;color:#1f1f1f;font-family:'Liberation Sans',sans-serif;">data/data/org.nativescript.MyVault/files/app</div>
<svg class="a" style="left:54.5px;top:943.5px;" width="15" height="20" viewBox="0 0 15 20"><path d="M1 2 Q1 1 2 1 H9.5 L14 5.5 V18 Q14 19 13 19 H2 Q1 19 1 18 Z" fill="none" stroke="#e36a2c" stroke-width="1.7" stroke-linejoin="round"/><path d="M8.6 1 V6.4 H14 Z" fill="#e36a2c"/></svg>
<div class="t " style="left:78.5px;top:943.50px;height:23px;line-height:23px;font-size:14.5px;color:#1f1f1f;font-family:'Liberation Sans',sans-serif;">bundle.js</div>
</div>
<div class="a" style="left:521px;top:177px;width:21px;height:960px;background:#f1f1f1;"></div>
<svg class="a" style="left:526px;top:185px;" width="10" height="6" viewBox="0 0 10 6"><path d="M0 6 L5 0 L10 6 Z" fill="#a3a3a3"/></svg>
<div class="a" style="left:523px;top:228.5px;width:17px;height:910px;background:#c1c1c1;"></div>
<div class="a" style="left:189px;top:1137px;width:353px;height:20px;background:#f1f1f1;"></div>
<svg class="a" style="left:196px;top:1142px;" width="6" height="10" viewBox="0 0 6 10"><path d="M6 0 L0 5 L6 10 Z" fill="#a3a3a3"/></svg>
<div class="a" style="left:210px;top:1138.5px;width:204px;height:17px;background:#c1c1c1;"></div>
<div class="a" style="left:543px;top:143px;width:1747px;height:33px;background:#dfe6f4;"></div>
<svg class="a" style="left:554px;top:150px;" width="19" height="19" viewBox="0 0 19 19"><rect x="1.2" y="1.2" width="16" height="16" rx="1.5" fill="none" stroke="#474747" stroke-width="2"/><path d="M6 1.5 V16.5" stroke="#474747" stroke-width="2"/><path d="M13 5.5 V12.5 L9 9 Z" fill="#474747"/></svg>
<div class="t " style="left:590px;top:148.50px;height:23px;line-height:23px;font-size:14.5px;color:#474747;font-family:'Liberation Sans',sans-serif;">app.css</div>
<div class="t " style="left:678px;top:148.50px;height:23px;line-height:23px;font-size:14.5px;color:#474747;font-family:'Liberation Sans',sans-serif;">main.ts</div>
<div class="t " style="left:764px;top:148.50px;height:23px;line-height:23px;font-size:14.5px;color:#474747;font-family:'Liberation Sans',sans-serif;">polyfills.ts</div>
<div class="t " style="left:868px;top:148.50px;height:23px;line-height:23px;font-size:14.5px;color:#474747;font-family:'Liberation Sans',sans-serif;">package.json"</div>
<div class="t " style="left:998px;top:148.50px;height:23px;line-height:23px;font-size:14.5px;color:#474747;font-family:'Liberation Sans',sans-serif;">startup</div>
<div class="t " style="left:1082px;top:148.50px;height:23px;line-height:23px;font-size:14.5px;color:#474747;font-family:'Liberation Sans',sans-serif;">bootstrap</div>
<div class="t " style="left:1186px;top:148.50px;height:23px;line-height:23px;font-size:14.5px;color:#474747;font-family:'Liberation Sans',sans-serif;">app-routing.module.ts</div>
<div class="t " style="left:1373px;top:148.50px;height:23px;line-height:23px;font-size:14.5px;color:#474747;font-family:'Liberation Sans',sans-serif;">app.module.ts</div>
<div class="t " style="left:1507px;top:148.50px;height:23px;line-height:23px;font-size:14.5px;color:#0b57d0;font-family:'Liberation Sans',sans-serif;">item.service.ts</div>
<div class="t " style="left:1638px;top:148.50px;height:23px;line-height:23px;font-size:14.5px;color:#474747;font-family:'Liberation Sans',sans-serif;">items.component.ts</div>
<div class="t " style="left:1806px;top:148.50px;height:23px;line-height:23px;font-size:14.5px;color:#474747;font-family:'Liberation Sans',sans-serif;">item-detail.component.ts</div>
<div class="t " style="left:2011px;top:148.50px;height:23px;line-height:23px;font-size:14.5px;color:#474747;font-family:'Liberation Sans',sans-serif;">app.component.ts</div>
<svg class="a" style="left:1607px;top:153px;" width="12" height="12" viewBox="0 0 12 12"><path d="M1 1 L11 11 M11 1 L1 11" stroke="#474747" stroke-width="1.7"/></svg>
<div class="a" style="left:1494px;top:174.8px;width:131px;height:2.2px;background:#0b57d0;"></div>
<svg class="a" style="left:2162px;top:152px;" width="16" height="14" viewBox="0 0 16 14"><path d="M2 2 L7 7 L2 12 M8 2 L13 7 L8 12" fill="none" stroke="#474747" stroke-width="1.7"/></svg>
<svg class="a" style="left:2261px;top:150px;" width="19" height="19" viewBox="0 0 19 19"><rect x="1.2" y="1.2" width="16" height="16" rx="1.5" fill="none" stroke="#474747" stroke-width="2"/><path d="M12.5 1.5 V16.5" stroke="#474747" stroke-width="2"/><path d="M5.5 5.5 V12.5 L9.5 9 Z" fill="#474747"/></svg>
<div class="a" style="left:2290px;top:143px;width:1px;height:1014px;background:#cad9f3;"></div>
<div class="a" style="left:2291px;top:143px;width:269px;height:33px;background:#dfe6f4;"></div>
<svg class="a" style="left:2303px;top:151px;" width="17" height="17" viewBox="0 0 17 17"><rect x="1" y="1" width="5" height="14.5" fill="none" stroke="#474747" stroke-width="2"/><rect x="10" y="1" width="5" height="14.5" fill="none" stroke="#474747" stroke-width="2"/></svg>
<svg class="a" style="left:2338px;top:148px;" width="18" height="22" viewBox="0 0 18 22"><path d="M2.5 11 A6.5 6 0 0 1 14.5 9" fill="none" stroke="#9aa0a6" stroke-width="1.8"/><path d="M11 6 L15.5 9.5 L16 4" fill="none" stroke="#9aa0a6" stroke-width="1.8"/><circle cx="8.5" cy="17" r="2.6" fill="#9aa0a6"/></svg>
<svg class="a" style="left:2375px;top:148px;" width="14" height="23" viewBox="0 0 14 23"><path d="M7 1 V12 M3 8 L7 12 L11 8" fill="none" stroke="#9aa0a6" stroke-width="1.8"/><circle cx="7" cy="18.5" r="2.6" fill="#9aa0a6"/></svg>
<svg class="a" style="left:2410px;top:148px;" width="14" height="23" viewBox="0 0 14 23"><path d="M7 13 V2 M3 6 L7 2 L11 6" fill="none" stroke="#9aa0a6" stroke-width="1.8"/><circle cx="7" cy="18.5" r="2.6" fill="#9aa0a6"/></svg>
<svg class="a" style="left:2440px;top:152px;" width="23" height="14" viewBox="0 0 23 14"><path d="M1 7 H12 M8 3 L12 7 L8 11" fill="none" stroke="#9aa0a6" stroke-width="1.8"/><circle cx="18.5" cy="7" r="2.6" fill="#9aa0a6"/></svg>
<div class="a" style="left:2474px;top:150px;width:1px;height:19px;background:#d3e3fd;"></div>
<svg class="a" style="left:2486px;top:150px;" width="22" height="20" viewBox="0 0 22 20"><path d="M2.5 5 H14 L19 10 L15 14.5 H2.5 Z" fill="none" stroke="#474747" stroke-width="1.8" stroke-linejoin="round"/><path d="M3 1.5 L19.5 18.5" stroke="#474747" stroke-width="1.8"/><path d="M3 1.5 L19.5 18.5" stroke="#dfe6f4" stroke-width="1" transform="translate(1.4 -1.4)"/></svg>
<div class="a" style="left:543px;top:177px;width:1727px;height:926px;background:#fff;"></div>
<div class="a" style="left:615px;top:224px;width:1px;height:189px;background:#dbe2f0;"></div>
<div class="a" style="left:648px;top:243px;width:1px;height:21px;background:#dbe2f0;"></div>
<div class="a" style="left:648px;top:306px;width:1px;height:21px;background:#dbe2f0;"></div>
<div class="a" style="left:648px;top:369px;width:1px;height:21px;background:#dbe2f0;"></div>
<div class="a" style="left:543px;top:177px;width:1727px;height:926px;overflow:hidden">
<div class="t" style="left:0px;width:47px;text-align:right;top:9.5px;height:21px;line-height:21px;font:13.75px 'Liberation Mono',monospace;color:#808080">1</div>
<div class="t" style="left:75px;top:9.5px;height:21px;line-height:21px;font:13.75px 'Liberation Mono',monospace"><span style="color:#b0006c">import</span><span style="color:#1f1f1f"> </span><span style="color:#b0006c">*</span><span style="color:#1f1f1f"> </span><span style="color:#b0006c">as</span><span style="color:#1f1f1f"> </span><span style="color:#1a4fc0">i0</span><span style="color:#1f1f1f"> </span><span style="color:#b0006c">from</span><span style="color:#1f1f1f"> </span><span style="color:#b3261e">"@angular/core"</span><span style="color:#1f1f1f">;</span></div>
<div class="t" style="left:0px;width:47px;text-align:right;top:30.5px;height:21px;line-height:21px;font:13.75px 'Liberation Mono',monospace;color:#808080">2</div>
<div class="t" style="left:75px;top:30.5px;height:21px;line-height:21px;font:13.75px 'Liberation Mono',monospace"><span style="color:#b0006c">export</span><span style="color:#1f1f1f"> </span><span style="color:#b0006c">class</span><span style="color:#1f1f1f"> </span><span style="color:#188038">ItemService</span><span style="color:#1f1f1f"> {</span></div>
<div class="t" style="left:0px;width:47px;text-align:right;top:51.5px;height:21px;line-height:21px;font:13.75px 'Liberation Mono',monospace;color:#808080">3</div>
<div class="t" style="left:75px;top:51.5px;height:21px;line-height:21px;font:13.75px 'Liberation Mono',monospace"><span style="color:#1f1f1f">    constructor() {</span></div>
<div class="t" style="left:0px;width:47px;text-align:right;top:72.5px;height:21px;line-height:21px;font:13.75px 'Liberation Mono',monospace;color:#808080">4</div>
<div class="t" style="left:75px;top:72.5px;height:21px;line-height:21px;font:13.75px 'Liberation Mono',monospace"><span style="color:#1f1f1f">        </span><span style="color:#b0006c">this</span><span style="color:#1f1f1f">.items = </span><span style="color:#b0006c">new</span><span style="color:#1f1f1f"> Array({ id: </span><span style="color:#1a50c8">1</span><span style="color:#1f1f1f">, name: </span><span style="color:#b3261e">'Ter Stegen'</span><span style="color:#1f1f1f">, role: </span><span style="color:#b3261e">'Goalkeeper'</span><span style="color:#1f1f1f"> }, { id: </span><span style="color:#1a50c8">3</span><span style="color:#1f1f1f">, name: </span><span style="color:#b3261e">'Piqué'</span><span style="color:#1f1f1f">, role: </span><span style="color:#b3261e">'Defender'</span><span style="color:#1f1f1f"> }, { id: </span><span style="color:#1a50c8">4</span><span style="color:#1f1f1f">, name: </span><span style="color:#b3261e">'I. Rakitic'</span><span style="color:#1f1f1f">, role: </span><span style="color:#b3261e">'Midfielder'</span><span style="color:#1f1f1f"> }, { id: </span><span style="color:#1a50c8">5</span><span style="color:#1f1f1f">, name: </span><span style="color:#b3261e">'Sergio'</span><span style="color:#1f1f1f">, role: </span><span style="color:#b3261e">'Midfielder'</span><span style="color:#1f1f1f"> }, { id: </span><span style="color:#1a50c8">6</span><span style="color:#1f1f1f">, name: </span><span style="color:#b3261e">'Denis Suárez'</span><span style="color:#1f1f1f">, role: </span><span style="color:#b3261e">'Midfielder'</span><span style="color:#1f1f1f"> });</span></div>
<div class="t" style="left:0px;width:47px;text-align:right;top:93.5px;height:21px;line-height:21px;font:13.75px 'Liberation Mono',monospace;color:#808080">5</div>
<div class="t" style="left:75px;top:93.5px;height:21px;line-height:21px;font:13.75px 'Liberation Mono',monospace"><span style="color:#1f1f1f">    }</span></div>
<div class="t" style="left:0px;width:47px;text-align:right;top:114.5px;height:21px;line-height:21px;font:13.75px 'Liberation Mono',monospace;color:#808080">6</div>
<div class="t" style="left:75px;top:114.5px;height:21px;line-height:21px;font:13.75px 'Liberation Mono',monospace"><span style="color:#1f1f1f">    getItems() {</span></div>
<div class="t" style="left:0px;width:47px;text-align:right;top:135.5px;height:21px;line-height:21px;font:13.75px 'Liberation Mono',monospace;color:#808080">7</div>
<div class="t" style="left:75px;top:135.5px;height:21px;line-height:21px;font:13.75px 'Liberation Mono',monospace"><span style="color:#1f1f1f">        </span><span style="color:#b0006c">return</span><span style="color:#1f1f1f"> </span><span style="color:#b0006c">this</span><span style="color:#1f1f1f">.items;</span></div>
<div class="t" style="left:0px;width:47px;text-align:right;top:156.5px;height:21px;line-height:21px;font:13.75px 'Liberation Mono',monospace;color:#808080">8</div>
<div class="t" style="left:75px;top:156.5px;height:21px;line-height:21px;font:13.75px 'Liberation Mono',monospace"><span style="color:#1f1f1f">    }</span></div>
<div class="t" style="left:0px;width:47px;text-align:right;top:177.5px;height:21px;line-height:21px;font:13.75px 'Liberation Mono',monospace;color:#808080">9</div>
<div class="t" style="left:75px;top:177.5px;height:21px;line-height:21px;font:13.75px 'Liberation Mono',monospace"><span style="color:#1f1f1f">    getItem(</span><span style="color:#1a3fa8">id</span><span style="color:#1f1f1f">) {</span></div>
<div class="t" style="left:0px;width:47px;text-align:right;top:198.5px;height:21px;line-height:21px;font:13.75px 'Liberation Mono',monospace;color:#808080">10</div>
<div class="t" style="left:75px;top:198.5px;height:21px;line-height:21px;font:13.75px 'Liberation Mono',monospace"><span style="color:#1f1f1f">        </span><span style="color:#b0006c">return</span><span style="color:#1f1f1f"> </span><span style="color:#b0006c">this</span><span style="color:#1f1f1f">.items.filter((</span><span style="color:#1a3fa8">item</span><span style="color:#1f1f1f">) =&gt; item.id === id)[</span><span style="color:#1a50c8">0</span><span style="color:#1f1f1f">];</span></div>
<div class="t" style="left:0px;width:47px;text-align:right;top:219.5px;height:21px;line-height:21px;font:13.75px 'Liberation Mono',monospace;color:#808080">11</div>
<div class="t" style="left:75px;top:219.5px;height:21px;line-height:21px;font:13.75px 'Liberation Mono',monospace"><span style="color:#1f1f1f">    }</span></div>
<div class="t" style="left:0px;width:47px;text-align:right;top:240.5px;height:21px;line-height:21px;font:13.75px 'Liberation Mono',monospace;color:#808080">12</div>
<div class="t" style="left:75px;top:240.5px;height:21px;line-height:21px;font:13.75px 'Liberation Mono',monospace"><span style="color:#1f1f1f">}</span></div>
<div class="t" style="left:0px;width:47px;text-align:right;top:261.5px;height:21px;line-height:21px;font:13.75px 'Liberation Mono',monospace;color:#808080">13</div>
<div class="t" style="left:75px;top:261.5px;height:21px;line-height:21px;font:13.75px 'Liberation Mono',monospace"><span style="color:#1f1f1f">ItemService.ɵfac = </span><span style="color:#b0006c">function</span><span style="color:#1f1f1f"> </span><span style="color:#1a4fc0">ItemService_Factory</span><span style="color:#1f1f1f">(</span><span style="color:#1a3fa8">t</span><span style="color:#1f1f1f">) { </span><span style="color:#b0006c">return</span><span style="color:#1f1f1f"> </span><span style="color:#b0006c">new</span><span style="color:#1f1f1f"> (t || ItemService)(); };</span></div>
<div class="t" style="left:0px;width:47px;text-align:right;top:282.5px;height:21px;line-height:21px;font:13.75px 'Liberation Mono',monospace;color:#808080">14</div>
<div class="t" style="left:75px;top:282.5px;height:21px;line-height:21px;font:13.75px 'Liberation Mono',monospace"><span style="color:#1f1f1f">ItemService.ɵprov = </span><span style="color:#188038">/*@__PURE__*/</span><span style="color:#1f1f1f"> i0.ɵɵdefineInjectable({ token: ItemService, factory: ItemService.ɵfac, providedIn: </span><span style="color:#b3261e">'root'</span><span style="color:#1f1f1f"> });</span></div>
<div class="t" style="left:0px;width:47px;text-align:right;top:303.5px;height:21px;line-height:21px;font:13.75px 'Liberation Mono',monospace;color:#808080">15</div>
<div class="t" style="left:75px;top:303.5px;height:21px;line-height:21px;font:13.75px 'Liberation Mono',monospace"></div>
</div>
<div class="a" style="left:2270px;top:177px;width:20px;height:926px;background:#f1f1f1;"></div>
<svg class="a" style="left:2275px;top:185px;" width="10" height="6" viewBox="0 0 10 6"><path d="M0 6 L5 0 L10 6 Z" fill="#a3a3a3"/></svg>
<div class="a" style="left:2272px;top:198px;width:17px;height:671px;background:#c1c1c1;"></div>
<svg class="a" style="left:2275px;top:1088px;" width="10" height="6" viewBox="0 0 10 6"><path d="M0 0 L10 0 L5 6 Z" fill="#505050"/></svg>
<div class="a" style="left:543px;top:1103px;width:1727px;height:21px;background:#f1f1f1;"></div>
<svg class="a" style="left:2256px;top:1109px;" width="6" height="10" viewBox="0 0 6 10"><path d="M0 0 L6 5 L0 10 Z" fill="#505050"/></svg>
<div class="a" style="left:2270px;top:1103px;width:20px;height:21px;background:#dcdcdc;"></div>
<div class="a" style="left:543px;top:1124px;width:1747px;height:1px;background:#cad9f3;"></div>
<div class="a" style="left:543px;top:1125px;width:1747px;height:32px;background:#fff;"></div>
<div class="t " style="left:2110px;top:1130.50px;height:23px;line-height:23px;font-size:14.5px;color:#1f1f1f;font-family:'Liberation Sans',sans-serif;text-decoration:underline;">(bundle.js)</div>
<div class="t " style="left:2183px;top:1130.50px;height:23px;line-height:23px;font-size:14.5px;color:#1f1f1f;font-family:'Liberation Sans',sans-serif;">Coverage: n/a</div>
<div class="a" style="left:2291px;top:177px;width:269px;height:54px;background:#e9eef8;"></div>
<div class="a" style="left:2291px;top:230px;width:269px;height:1px;background:#cad9f3;"></div>
<svg class="a" style="left:2303px;top:184px;" width="8" height="11" viewBox="0 0 8 11"><path d="M0 0 V11 L8 5.5 Z" fill="#1f1f1f"/></svg>
<div class="t " style="left:2317px;top:178.00px;height:23px;line-height:23px;font-size:14.5px;color:#1f1f1f;font-family:'Liberation Sans',sans-serif;">Watch</div>
<svg class="a" style="left:2301px;top:213px;" width="11" height="8" viewBox="0 0 11 8"><path d="M0 0 H11 L5.5 8 Z" fill="#1f1f1f"/></svg>
<div class="t " style="left:2317px;top:205.00px;height:23px;line-height:23px;font-size:14.5px;color:#1f1f1f;font-family:'Liberation Sans',sans-serif;">Breakpoints</div>
<div class="a" style="left:2291px;top:231px;width:269px;height:52px;background:#fff;"></div>
<div class="a" style="left:2299px;top:238.5px;width:15px;height:15px;top:238.2px;border:1.5px solid #6f6f6f;border-radius:3px;"></div>
<div class="t " style="left:2321px;top:234.00px;height:23px;line-height:23px;font-size:14.5px;color:#1f1f1f;font-family:'Liberation Sans',sans-serif;">Pause on uncaught exceptions</div>
<div class="a" style="left:2299px;top:238.5px;width:15px;height:15px;top:261.4px;border:1.5px solid #6f6f6f;border-radius:3px;"></div>
<div class="t " style="left:2321px;top:257.20px;height:23px;line-height:23px;font-size:14.5px;color:#1f1f1f;font-family:'Liberation Sans',sans-serif;">Pause on caught exceptions</div>
<div class="a" style="left:2291px;top:283px;width:269px;height:1px;background:#cad9f3;"></div>
<div class="a" style="left:2291px;top:284px;width:269px;height:55px;background:#fff;"></div>
<svg class="a" style="left:2298px;top:296px;" width="11" height="8" viewBox="0 0 11 8"><path d="M0 0 H11 L5.5 8 Z" fill="#474747"/></svg>
<svg class="a" style="left:2316px;top:292px;" width="16" height="16" viewBox="0 0 16 16"><rect x="1" y="1" width="14" height="14" rx="2" fill="none" stroke="#e36a2c" stroke-width="1.7"/><path d="M6 5.5 L3.8 8 L6 10.5 M10 5.5 L12.2 8 L10 10.5" fill="none" stroke="#e36a2c" stroke-width="1.5"/></svg>
<div class="t " style="left:2339px;top:288.10px;height:23px;line-height:23px;font-size:14.5px;color:#1f1f1f;font-family:'Liberation Sans',sans-serif;">item-detail.component.ts</div>
<div class="a" style="left:2316.5px;top:317px;width:15px;height:15px;background:#1a73e8;border-radius:3px;"></div>
<svg class="a" style="left:2318px;top:319px;" width="12" height="11" viewBox="0 0 12 11"><path d="M1.5 5.5 L4.5 8.5 L10.5 2" fill="none" stroke="#fff" stroke-width="2.2"/></svg>
<div class="t " style="left:2339px;top:314.50px;height:22px;line-height:22px;font-size:13.75px;color:#8a8a8a;font-family:'Liberation Mono',monospace;">const id = +this.rou…</div>
<div class="t " style="left:2534px;top:312.50px;height:23px;line-height:23px;font-size:14.5px;color:#1f1f1f;font-family:'Liberation Sans',sans-serif;">13</div>
<div class="a" style="left:2291px;top:338.5px;width:269px;height:28px;background:#e9eef8;"></div>
<div class="a" style="left:2291px;top:366px;width:269px;height:1px;background:#cad9f3;"></div>
<svg class="a" style="left:2301px;top:349px;" width="11" height="8" viewBox="0 0 11 8"><path d="M0 0 H11 L5.5 8 Z" fill="#1f1f1f"/></svg>
<div class="t " style="left:2317px;top:340.90px;height:23px;line-height:23px;font-size:14.5px;color:#1f1f1f;font-family:'Liberation Sans',sans-serif;">Scope</div>
<div class="t " style="left:2389px;top:373.50px;height:23px;line-height:23px;font-size:14.5px;color:#757575;font-family:'Liberation Sans',sans-serif;font-style:italic;">Not paused</div>
<div class="a" style="left:2291px;top:401.5px;width:269px;height:28px;background:#e9eef8;"></div>
<div class="a" style="left:2291px;top:429px;width:269px;height:1px;background:#cad9f3;"></div>
<svg class="a" style="left:2301px;top:412px;" width="11" height="8" viewBox="0 0 11 8"><path d="M0 0 H11 L5.5 8 Z" fill="#1f1f1f"/></svg>
<div class="t " style="left:2317px;top:404.30px;height:23px;line-height:23px;font-size:14.5px;color:#1f1f1f;font-family:'Liberation Sans',sans-serif;">Call Stack</div>
<div class="t " style="left:2389px;top:435.90px;height:23px;line-height:23px;font-size:14.5px;color:#757575;font-family:'Liberation Sans',sans-serif;font-style:italic;">Not paused</div>
<div class="a" style="left:2291px;top:464px;width:269px;height:137.5px;background:#e9eef8;"></div>
<svg class="a" style="left:2303px;top:472.2px;" width="8" height="11" viewBox="0 0 8 11"><path d="M0 0 V11 L8 5.5 Z" fill="#1f1f1f"/></svg>
<div class="t " style="left:2317px;top:466.20px;height:23px;line-height:23px;font-size:14.5px;color:#1f1f1f;font-family:'Liberation Sans',sans-serif;">XHR/fetch Breakpoints</div>
<svg class="a" style="left:2303px;top:499.9px;" width="8" height="11" viewBox="0 0 8 11"><path d="M0 0 V11 L8 5.5 Z" fill="#1f1f1f"/></svg>
<div class="t " style="left:2317px;top:493.90px;height:23px;line-height:23px;font-size:14.5px;color:#1f1f1f;font-family:'Liberation Sans',sans-serif;">DOM Breakpoints</div>
<svg class="a" style="left:2303px;top:527.1px;" width="8" height="11" viewBox="0 0 8 11"><path d="M0 0 V11 L8 5.5 Z" fill="#1f1f1f"/></svg>
<div class="t " style="left:2317px;top:521.10px;height:23px;line-height:23px;font-size:14.5px;color:#1f1f1f;font-family:'Liberation Sans',sans-serif;">Global Listeners</div>
<svg class="a" style="left:2303px;top:555.1px;" width="8" height="11" viewBox="0 0 8 11"><path d="M0 0 V11 L8 5.5 Z" fill="#1f1f1f"/></svg>
<div class="t " style="left:2317px;top:549.10px;height:23px;line-height:23px;font-size:14.5px;color:#1f1f1f;font-family:'Liberation Sans',sans-serif;">Event Listener Breakpoints</div>
<svg class="a" style="left:2303px;top:582.3px;" width="8" height="11" viewBox="0 0 8 11"><path d="M0 0 V11 L8 5.5 Z" fill="#1f1f1f"/></svg>
<div class="t " style="left:2317px;top:576.30px;height:23px;line-height:23px;font-size:14.5px;color:#1f1f1f;font-family:'Liberation Sans',sans-serif;">CSP Violation Breakpoints</div>
<div class="a" style="left:188px;top:1157px;width:2372px;height:35px;background:#dfe6f4;"></div>
<div class="a" style="left:188px;top:1191px;width:2372px;height:1px;background:#cad9f3;"></div>
<svg class="a" style="left:205px;top:1165px;" width="8" height="19" viewBox="0 0 8 19"><circle cx="4" cy="3" r="1.9" fill="#474747"/><circle cx="4" cy="9.5" r="1.9" fill="#474747"/><circle cx="4" cy="16" r="1.9" fill="#474747"/></svg>
<div class="t " style="left:236px;top:1163.50px;height:23px;line-height:23px;font-size:14.5px;color:#0b57d0;font-family:'Liberation Sans',sans-serif;">Console</div>
<div class="a" style="left:224px;top:1189px;width:78px;height:3px;background:#0b57d0;"></div>
<div class="t " style="left:313px;top:1163.50px;height:23px;line-height:23px;font-size:14.5px;color:#474747;font-family:'Liberation Sans',sans-serif;">What's new</div>
<svg class="a" style="left:2533px;top:1167px;" width="15" height="15" viewBox="0 0 15 15"><path d="M1.5 1.5 L13.5 13.5 M13.5 1.5 L1.5 13.5" stroke="#1f1f1f" stroke-width="1.8"/></svg>
<div class="a" style="left:188px;top:1192px;width:2372px;height:32px;background:#fff;"></div>
<div class="a" style="left:188px;top:1224px;width:2372px;height:1px;background:#cad9f3;"></div>
<svg class="a" style="left:200px;top:1199px;" width="19" height="19" viewBox="0 0 19 19"><rect x="1.2" y="1.2" width="16" height="16" rx="1.5" fill="none" stroke="#474747" stroke-width="2"/><path d="M6 1.5 V16.5" stroke="#474747" stroke-width="2"/><path d="M9 5.5 V12.5 L13 9 Z" fill="#474747"/></svg>
<svg class="a" style="left:234px;top:1198px;" width="20" height="20" viewBox="0 0 20 20"><circle cx="10" cy="10" r="8.4" fill="none" stroke="#474747" stroke-width="2"/><path d="M4 16 L16 4" stroke="#474747" stroke-width="2"/></svg>
<div class="a" style="left:267px;top:1198px;width:1px;height:20px;background:#d3e3fd;"></div>
<svg class="a" style="left:288px;top:1203px;" width="12" height="8" viewBox="0 0 12 8"><path d="M0 0 H12 L6 8 Z" fill="#474747"/></svg>
<div class="a" style="left:312px;top:1198px;width:1px;height:20px;background:#d3e3fd;"></div>
<svg class="a" style="left:324px;top:1200px;" width="22" height="16" viewBox="0 0 22 16"><path d="M1.5 8 Q11 -2.5 20.5 8 Q11 18.5 1.5 8 Z" fill="none" stroke="#474747" stroke-width="1.9"/><circle cx="11" cy="8" r="3.3" fill="none" stroke="#474747" stroke-width="1.9"/></svg>
<div class="a" style="left:358px;top:1198px;width:1px;height:20px;background:#d3e3fd;"></div>
<div class="a" style="left:368px;top:1196.5px;width:1957px;height:23.5px;background:#fff;border:1px solid #bdbdbd;border-radius:6px;"></div>
<div class="t " style="left:373px;top:1197.00px;height:23px;line-height:23px;font-size:14.5px;color:#8a8a8a;font-family:'Liberation Sans',sans-serif;">Filter</div>
<div class="t " style="left:2338px;top:1196.50px;height:23px;line-height:23px;font-size:14.5px;color:#1f1f1f;font-family:'Liberation Sans',sans-serif;">All levels</div>
<svg class="a" style="left:2399px;top:1203px;" width="10" height="8" viewBox="0 0 10 8"><path d="M0 0 H10 L5 8 Z" fill="#1f1f1f"/></svg>
<div class="a" style="left:2422px;top:1198px;width:1px;height:20px;background:#d3e3fd;"></div>
<div class="t " style="left:2438px;top:1196.50px;height:23px;line-height:23px;font-size:14.5px;color:#1f1f1f;font-family:'Liberation Sans',sans-serif;">No Issues</div>
<div class="a" style="left:2514px;top:1198px;width:1px;height:20px;background:#d3e3fd;"></div>
<svg class="a" style="left:2527px;top:1198px;" width="21" height="21" viewBox="0 0 21 21"><g transform="translate(10.5 10.5)"><path d="M-1.7 -9.5 H1.7 L2.3 -6.7 Q3.7 -6.1 4.8 -5.3 L7.6 -6.2 L9.3 -3.3 L7.2 -1.4 Q7.4 0 7.2 1.4 L9.3 3.3 L7.6 6.2 L4.8 5.3 Q3.7 6.1 2.3 6.7 L1.7 9.5 H-1.7 L-2.3 6.7 Q-3.7 6.1 -4.8 5.3 L-7.6 6.2 L-9.3 3.3 L-7.2 1.4 Q-7.4 0 -7.2 -1.4 L-9.3 -3.3 L-7.6 -6.2 L-4.8 -5.3 Q-3.7 -6.1 -2.3 -6.7 Z" fill="#1a73e8"/><circle r="3" fill="#fff"/></g></svg>
<div class="a" style="left:188px;top:1225px;width:2372px;height:154px;background:#fff;"></div>
<div class="a" style="left:199.5px;top:1233.5px;width:15px;height:15px;border:1.5px solid #6f6f6f;border-radius:3px;"></div>
<div class="t " style="left:222px;top:1230.50px;height:23px;line-height:23px;font-size:14.5px;color:#1f1f1f;font-family:'Liberation Sans',sans-serif;">Hide network</div>
<div class="a" style="left:199.5px;top:1266.1px;width:15px;height:15px;border:1.5px solid #6f6f6f;border-radius:3px;"></div>
<div class="t " style="left:222px;top:1263.10px;height:23px;line-height:23px;font-size:14.5px;color:#1f1f1f;font-family:'Liberation Sans',sans-serif;">Preserve log</div>
<div class="a" style="left:199.5px;top:1298.7px;width:15px;height:15px;border:1.5px solid #6f6f6f;border-radius:3px;"></div>
<div class="t " style="left:222px;top:1295.70px;height:23px;line-height:23px;font-size:14.5px;color:#1f1f1f;font-family:'Liberation Sans',sans-serif;">Selected context only</div>
<div class="a" style="left:199.5px;top:1331.3px;width:15px;height:15px;background:#1a73e8;border-radius:3px;"></div>
<svg class="a" style="left:201px;top:1333.3px;" width="12" height="11" viewBox="0 0 12 11"><path d="M1.5 5.5 L4.5 8.5 L10.5 2" fill="none" stroke="#fff" stroke-width="2.2"/></svg>
<div class="t " style="left:222px;top:1328.30px;height:23px;line-height:23px;font-size:14.5px;color:#1f1f1f;font-family:'Liberation Sans',sans-serif;">Group similar messages in console</div>
<div class="a" style="left:199.5px;top:1363.9px;width:15px;height:15px;background:#1a73e8;border-radius:3px;"></div>
<svg class="a" style="left:201px;top:1365.9px;" width="12" height="11" viewBox="0 0 12 11"><path d="M1.5 5.5 L4.5 8.5 L10.5 2" fill="none" stroke="#fff" stroke-width="2.2"/></svg>
<div class="t " style="left:222px;top:1360.90px;height:23px;line-height:23px;font-size:14.5px;color:#1f1f1f;font-family:'Liberation Sans',sans-serif;">Show CORS errors in console</div>
<div class="a" style="left:0px;top:1379px;width:2560px;height:1px;background:#c9c9c9;"></div>
<div class="a" style="left:428px;top:495.5px;width:1686px;height:884.5px;background:#181818;border-radius:8px 8px 0 0;box-shadow:0 8px 36px 0 rgba(0,0,0,0.24);border:1px solid #0c0c0c;border-top-color:#262626;"></div>
<svg class="a" style="left:439px;top:507px;" width="21" height="21" viewBox="0 0 21 21"><g transform="scale(0.205)"><defs><clipPath id="lgR"><rect x="69" y="-5" width="40" height="110"/></clipPath></defs><path d="M70.9 99.3C72.5 99.9 74.3 99.9 75.9 99.1L96.5 89.2C98.6 88.2 100 86 100 83.6V16.4C100 14 98.6 11.8 96.5 10.8L75.9 0.9C73.8 -0.1 71.3 0.1 69.5 1.4C69.3 1.6 69 1.8 68.8 2.1L29.4 38L12.2 25C10.6 23.8 8.4 23.9 6.9 25.2L1.4 30.3C-0.5 31.9 -0.5 34.8 1.4 36.4L16.2 50L1.4 63.6C-0.5 65.2 -0.5 68.1 1.4 69.7L6.9 74.8C8.4 76.1 10.6 76.2 12.2 75L29.4 62L68.8 97.9C69.4 98.5 70.1 99 70.9 99.3ZM75 27.3L45.1 50L75 72.7V27.3Z" fill="#0a6fbf" fill-rule="evenodd"/><path d="M70.9 99.3C72.5 99.9 74.3 99.9 75.9 99.1L96.5 89.2C98.6 88.2 100 86 100 83.6V16.4C100 14 98.6 11.8 96.5 10.8L75.9 0.9C73.8 -0.1 71.3 0.1 69.5 1.4C69.3 1.6 69 1.8 68.8 2.1L29.4 38L12.2 25C10.6 23.8 8.4 23.9 6.9 25.2L1.4 30.3C-0.5 31.9 -0.5 34.8 1.4 36.4L16.2 50L1.4 63.6C-0.5 65.2 -0.5 68.1 1.4 69.7L6.9 74.8C8.4 76.1 10.6 76.2 12.2 75L29.4 62L68.8 97.9C69.4 98.5 70.1 99 70.9 99.3ZM75 27.3L45.1 50L75 72.7V27.3Z" fill="#1f9cf0" fill-rule="evenodd" clip-path="url(#lgR)"/></g></svg>
<div class="t " style="left:481px;top:505.50px;height:25px;line-height:25px;font-size:15.8px;color:#cccccc;font-family:'Liberation Sans',sans-serif;">File</div>
<div class="t " style="left:525px;top:505.50px;height:25px;line-height:25px;font-size:15.8px;color:#cccccc;font-family:'Liberation Sans',sans-serif;">Edit</div>
<div class="t " style="left:572px;top:505.50px;height:25px;line-height:25px;font-size:15.8px;color:#cccccc;font-family:'Liberation Sans',sans-serif;">Selection</div>
<div class="t " style="left:657px;top:505.50px;height:25px;line-height:25px;font-size:15.8px;color:#cccccc;font-family:'Liberation Sans',sans-serif;">View</div>
<div class="t " style="left:712px;top:505.50px;height:25px;line-height:25px;font-size:15.8px;color:#cccccc;font-family:'Liberation Sans',sans-serif;">Go</div>
<div class="t " style="left:752px;top:505.50px;height:25px;line-height:25px;font-size:15.8px;color:#cccccc;font-family:'Liberation Sans',sans-serif;">Run</div>
<svg class="a" style="left:806px;top:510px;" width="17" height="5" viewBox="0 0 17 5"><circle cx="2" cy="2.5" r="1.7" fill="#cccccc"/><circle cx="8.5" cy="2.5" r="1.7" fill="#cccccc"/><circle cx="15" cy="2.5" r="1.7" fill="#cccccc"/></svg>
<svg class="a" style="left:918px;top:508px;" width="18" height="16" viewBox="0 0 18 16"><path d="M17 8 H2 M8 1.5 L1.5 8 L8 14.5" fill="none" stroke="#cccccc" stroke-width="1.4"/></svg>
<svg class="a" style="left:951px;top:508px;" width="18" height="16" viewBox="0 0 18 16"><path d="M1 8 H16 M10 1.5 L16.5 8 L10 14.5" fill="none" stroke="#8a8a8a" stroke-width="1.4"/></svg>
<div class="a" style="left:986.5px;top:502.5px;width:642.5px;height:28px;background:#212121;border:1px solid #373737;border-radius:7px;"></div>
<svg class="a" style="left:1270px;top:506px;" width="19" height="19" viewBox="0 0 19 19"><circle cx="11.5" cy="7.5" r="5.8" fill="none" stroke="#cccccc" stroke-width="1.4"/><path d="M7.3 11.7 L1.5 17.5" stroke="#cccccc" stroke-width="1.5"/></svg>
<div class="t " style="left:1295px;top:504.00px;height:25px;line-height:25px;font-size:16px;color:#cccccc;font-family:'Liberation Sans',sans-serif;">MyVault</div>
<svg class="a" style="left:1820px;top:506px;" width="19" height="20" viewBox="0 0 19 20"><rect x="0.8" y="0.8" width="17.4" height="18.4" rx="2.5" fill="none" stroke="#cccccc" stroke-width="1.5"/><rect x="1" y="1" width="6.5" height="18" rx="1.5" fill="#cccccc"/></svg>
<svg class="a" style="left:1853px;top:506px;" width="19" height="20" viewBox="0 0 19 20"><rect x="0.8" y="0.8" width="17.4" height="18.4" rx="2.5" fill="none" stroke="#cccccc" stroke-width="1.5"/><rect x="1" y="11" width="17" height="8" rx="1.5" fill="#cccccc"/></svg>
<div class="a" style="left:1885px;top:504.5px;width:62px;height:33.5px;background:#1c1c1c;border:1px solid #333;border-right:none;border-radius:6px 0 0 6px;"></div>
<svg class="a" style="left:1898px;top:514px;" width="11" height="14" viewBox="0 0 11 14"><g fill="#8a8a8a"><circle cx="2" cy="2" r="1.5"/><circle cx="8" cy="2" r="1.5"/><circle cx="2" cy="7" r="1.5"/><circle cx="8" cy="7" r="1.5"/><circle cx="2" cy="12" r="1.5"/><circle cx="8" cy="12" r="1.5"/></g></svg>
<svg class="a" style="left:1922px;top:515px;" width="12" height="13" viewBox="0 0 12 13"><rect x="0.5" y="0" width="2.6" height="13" fill="#75beff"/><rect x="8.3" y="0" width="2.6" height="13" fill="#75beff"/></svg>
<svg class="a" style="left:1965px;top:515px;" width="15" height="3" viewBox="0 0 15 3"><rect y="0.7" width="14" height="1.3" fill="#cccccc"/></svg>
<svg class="a" style="left:2021px;top:509px;" width="15" height="15" viewBox="0 0 15 15"><rect x="0.7" y="0.7" width="13" height="13" fill="none" stroke="#cccccc" stroke-width="1.3"/></svg>
<svg class="a" style="left:2079px;top:509px;" width="15" height="15" viewBox="0 0 15 15"><path d="M0.7 0.7 L14.3 14.3 M14.3 0.7 L0.7 14.3" stroke="#cccccc" stroke-width="1.3"/></svg>
<div class="a" style="left:428px;top:538px;width:1686px;height:1px;background:#2b2b2b;"></div>
<div class="a" style="left:486px;top:539px;width:1px;height:840px;background:#2b2b2b;"></div>
<div class="a" style="left:428px;top:539px;width:2px;height:60px;background:#0078d4;"></div>
<svg class="a" style="left:442px;top:552px;" width="30" height="34" viewBox="0 0 30 34"><path d="M9.5 2.5 Q9.5 1.5 10.5 1.5 H22.5 L27.5 6.5 V22.5 Q27.5 23.5 26.5 23.5 H10.5 Q9.5 23.5 9.5 22.5 Z" fill="none" stroke="#d7d7d7" stroke-width="2.1" stroke-linejoin="round"/><path d="M22 1.5 V7 H27.5" fill="none" stroke="#d7d7d7" stroke-width="1.8"/><path d="M9.5 9.5 H3 Q2 9.5 2 10.5 V30.5 Q2 31.5 3 31.5 H17" fill="none" stroke="#d7d7d7" stroke-width="2.1"/></svg>
<div class="a" style="left:457.5px;top:570.0px;width:19px;height:19px;background:#0078d4;border-radius:50%;"></div>
<div class="t " style="left:463.3px;top:570.00px;height:19px;line-height:19px;font-size:12px;color:#ffffff;font-family:'Liberation Sans',sans-serif;font-weight:bold;">1</div>
<div class="a" style="left:457.5px;top:688.5px;width:19px;height:19px;background:#0078d4;border-radius:50%;"></div>
<div class="t " style="left:463.3px;top:688.50px;height:19px;line-height:19px;font-size:12px;color:#ffffff;font-family:'Liberation Sans',sans-serif;font-weight:bold;">1</div>
<div class="a" style="left:457.5px;top:747.0px;width:19px;height:19px;background:#0078d4;border-radius:50%;"></div>
<div class="t " style="left:463.3px;top:747.00px;height:19px;line-height:19px;font-size:12px;color:#ffffff;font-family:'Liberation Sans',sans-serif;font-weight:bold;">1</div>
<svg class="a" style="left:443px;top:613px;" width="28" height="29" viewBox="0 0 28 29"><circle cx="16.5" cy="11" r="8.8" fill="none" stroke="#868686" stroke-width="2"/><path d="M10.3 17.3 L1.5 27" stroke="#868686" stroke-width="2.2"/></svg>
<svg class="a" style="left:444px;top:673px;" width="26" height="30" viewBox="0 0 26 30"><circle cx="7" cy="5" r="3.5" fill="none" stroke="#868686" stroke-width="1.8"/><circle cx="7" cy="25" r="3.5" fill="none" stroke="#868686" stroke-width="1.8"/><circle cx="19" cy="13" r="3.5" fill="none" stroke="#868686" stroke-width="1.8"/><path d="M7 8.5 V21.5 M7 17 Q19 17 19 16.5" fill="none" stroke="#868686" stroke-width="1.8"/></svg>
<svg class="a" style="left:441px;top:733px;" width="32" height="31" viewBox="0 0 32 31"><path d="M12.5 2.5 V12 M12.5 2.5 L29 13 L19 19.5" fill="none" stroke="#868686" stroke-width="1.9" stroke-linejoin="round"/><ellipse cx="10" cy="22" rx="5.2" ry="6.3" fill="#181818" stroke="#868686" stroke-width="1.9"/><path d="M1.5 18 H4.5 M1.5 22.5 H4.5 M2 28 L4.8 25.5 M15.5 18 H18.5 M15.5 22.5 H18.5 M18 28 L15.2 25.5 M10 16 V28" stroke="#868686" stroke-width="1.6"/></svg>
<svg class="a" style="left:441px;top:793px;" width="30" height="30" viewBox="0 0 30 30"><rect x="2" y="10" width="10" height="10" fill="none" stroke="#868686" stroke-width="1.9"/><rect x="2" y="20" width="10" height="10" fill="none" stroke="#868686" stroke-width="1.9"/><rect x="12" y="20" width="10" height="10" fill="none" stroke="#868686" stroke-width="1.9"/><rect x="17" y="2" width="10" height="10" rx="1.5" fill="none" stroke="#868686" stroke-width="1.9"/></svg>
<svg class="a" style="left:442px;top:854px;" width="30" height="30" viewBox="0 0 30 30"><path d="M20 23 H3 Q1.5 23 1.5 21.5 V3 Q1.5 1.5 3 1.5 H26 Q27.5 1.5 27.5 3 V9" fill="none" stroke="#868686" stroke-width="1.9"/><path d="M8 27 H15" stroke="#868686" stroke-width="1.9"/><circle cx="20.5" cy="20.5" r="7.5" fill="#181818" stroke="#868686" stroke-width="1.8"/><path d="M17 18 L19 20.5 L17 23 M24 18 L22 20.5 L24 23" fill="none" stroke="#868686" stroke-width="1.4"/></svg>
<svg class="a" style="left:444px;top:913px;" width="26" height="31" viewBox="0 0 26 31"><path d="M8.5 2 H17.5 M10 2 V11.5 L2 27 Q1.5 29 3.5 29 H22.5 Q24.5 29 24 27 L16 11.5 V2 M5 21 H21" fill="none" stroke="#868686" stroke-width="1.9" stroke-linejoin="round"/></svg>
<svg class="a" style="left:441px;top:974px;" width="30" height="31" viewBox="0 0 30 31"><path d="M12 2.5 H22 L27 7.5 V28 H12 Z" fill="none" stroke="#868686" stroke-width="1.9"/><path d="M15.5 13 H23.5 M15.5 18 H23.5 M15.5 23 H23.5" stroke="#868686" stroke-width="1.8"/><path d="M2 14 Q2 6 9 6 M6 2.5 L9.5 6 L6 9.5" fill="none" stroke="#868686" stroke-width="1.8"/></svg>
<svg class="a" style="left:441px;top:1037px;" width="32" height="22" viewBox="0 0 32 22"><path d="M1 11 H26 Q30 8 31 11 Q29 13 27 13 Q24 21 13 21 Q3 21 1 11 Z" fill="#868686"/><g fill="#868686"><rect x="6" y="7" width="3.5" height="3"/><rect x="10" y="7" width="3.5" height="3"/><rect x="14" y="7" width="3.5" height="3"/><rect x="18" y="7" width="3.5" height="3"/><rect x="10" y="3.5" width="3.5" height="3"/><rect x="14" y="3.5" width="3.5" height="3"/><rect x="14" y="0" width="3.5" height="3"/></g></svg>
<div class="a" style="left:790.5px;top:539px;width:1px;height:840px;background:#2b2b2b;"></div>
<div class="t " style="left:512.5px;top:552.50px;height:18px;line-height:18px;font-size:11.5px;color:#cccccc;font-family:'Liberation Sans',sans-serif;letter-spacing:0.4px;">EXPLORER</div>
<svg class="a" style="left:755px;top:559px;" width="16" height="5" viewBox="0 0 16 5"><circle cx="2" cy="2.5" r="1.6" fill="#cccccc"/><circle cx="8" cy="2.5" r="1.6" fill="#cccccc"/><circle cx="14" cy="2.5" r="1.6" fill="#cccccc"/></svg>
<div class="a" style="left:487px;top:940px;width:304px;height:28px;background:#37373d;"></div>
<div class="a" style="left:541.5px;top:885px;width:1px;height:165px;background:#585858;"></div>
<svg class="a" style="left:492.5px;top:592.5px;" width="14" height="9" viewBox="0 0 14 9"><path d="M1.5 1.5 L7 7 L12.5 1.5" fill="none" stroke="#cccccc" stroke-width="1.4"/></svg>
<div class="t " style="left:512.5px;top:586.50px;height:20px;line-height:20px;font-size:12.8px;color:#cccccc;font-family:'Liberation Sans',sans-serif;font-weight:bold;">MYVAULT</div>
<svg class="a" style="left:510px;top:620.04px;" width="14" height="9" viewBox="0 0 14 9"><path d="M1.5 1.5 L7 7 L12.5 1.5" fill="none" stroke="#cccccc" stroke-width="1.4"/></svg>
<div class="t " style="left:530px;top:611.54px;height:25px;line-height:25px;font-size:16px;color:#e86452;font-family:'Liberation Sans',sans-serif;">MyVault</div>
<div class="a" style="left:759px;top:619.04px;width:10px;height:10px;background:#8a4037;border-radius:50%;"></div>
<svg class="a" style="left:523px;top:644.58px;" width="9" height="14" viewBox="0 0 9 14"><path d="M1.5 1.5 L7 7 L1.5 12.5" fill="none" stroke="#cccccc" stroke-width="1.4"/></svg>
<div class="t " style="left:540px;top:639.08px;height:25px;line-height:25px;font-size:16px;color:#73c991;font-family:'Liberation Sans',sans-serif;">.vscode</div>
<div class="a" style="left:759px;top:646.58px;width:10px;height:10px;background:#3f6d4c;border-radius:50%;"></div>
<svg class="a" style="left:523px;top:672.12px;" width="9" height="14" viewBox="0 0 9 14"><path d="M1.5 1.5 L7 7 L1.5 12.5" fill="none" stroke="#cccccc" stroke-width="1.4"/></svg>
<div class="t " style="left:540px;top:666.62px;height:25px;line-height:25px;font-size:16px;color:#cccccc;font-family:'Liberation Sans',sans-serif;">App_Resources</div>
<svg class="a" style="left:520px;top:702.66px;" width="14" height="9" viewBox="0 0 14 9"><path d="M1.5 1.5 L7 7 L12.5 1.5" fill="none" stroke="#cccccc" stroke-width="1.4"/></svg>
<div class="t " style="left:540px;top:694.16px;height:25px;line-height:25px;font-size:16px;color:#8c8c8c;font-family:'Liberation Sans',sans-serif;">hooks \ before-checkForChanges</div>
<div class="t " style="left:528px;top:723.20px;height:20px;line-height:20px;font-size:12.5px;color:#cbcb41;font-family:'Liberation Sans',sans-serif;font-weight:bold;letter-spacing:-0.5px;">JS</div>
<div class="t " style="left:550px;top:721.70px;height:25px;line-height:25px;font-size:16px;color:#8c8c8c;font-family:'Liberation Sans',sans-serif;">nativescript-core.js</div>
<svg class="a" style="left:523px;top:754.74px;" width="9" height="14" viewBox="0 0 9 14"><path d="M1.5 1.5 L7 7 L1.5 12.5" fill="none" stroke="#cccccc" stroke-width="1.4"/></svg>
<div class="t " style="left:540px;top:749.24px;height:25px;line-height:25px;font-size:16px;color:#8c8c8c;font-family:'Liberation Sans',sans-serif;">node_modules</div>
<svg class="a" style="left:523px;top:782.28px;" width="9" height="14" viewBox="0 0 9 14"><path d="M1.5 1.5 L7 7 L1.5 12.5" fill="none" stroke="#cccccc" stroke-width="1.4"/></svg>
<div class="t " style="left:540px;top:776.78px;height:25px;line-height:25px;font-size:16px;color:#e86452;font-family:'Liberation Sans',sans-serif;">platforms</div>
<div class="a" style="left:759px;top:784.28px;width:10px;height:10px;background:#8a4037;border-radius:50%;"></div>
<svg class="a" style="left:520px;top:812.8199999999999px;" width="14" height="9" viewBox="0 0 14 9"><path d="M1.5 1.5 L7 7 L12.5 1.5" fill="none" stroke="#cccccc" stroke-width="1.4"/></svg>
<div class="t " style="left:540px;top:804.32px;height:25px;line-height:25px;font-size:16px;color:#cccccc;font-family:'Liberation Sans',sans-serif;">src</div>
<svg class="a" style="left:530px;top:840.36px;" width="14" height="9" viewBox="0 0 14 9"><path d="M1.5 1.5 L7 7 L12.5 1.5" fill="none" stroke="#cccccc" stroke-width="1.4"/></svg>
<div class="t " style="left:550px;top:831.86px;height:25px;line-height:25px;font-size:16px;color:#cccccc;font-family:'Liberation Sans',sans-serif;">app</div>
<svg class="a" style="left:540px;top:867.9px;" width="14" height="9" viewBox="0 0 14 9"><path d="M1.5 1.5 L7 7 L12.5 1.5" fill="none" stroke="#cccccc" stroke-width="1.4"/></svg>
<div class="t " style="left:560px;top:859.40px;height:25px;line-height:25px;font-size:16px;color:#cccccc;font-family:'Liberation Sans',sans-serif;">item</div>
<svg class="a" style="left:548px;top:892.44px;" width="16" height="14" viewBox="0 0 16 14"><path d="M5.5 2.5 L1.5 7 L5.5 11.5 M10.5 2.5 L14.5 7 L10.5 11.5" fill="none" stroke="#e37933" stroke-width="2"/></svg>
<div class="t " style="left:570px;top:886.94px;height:25px;line-height:25px;font-size:16px;color:#cccccc;font-family:'Liberation Sans',sans-serif;">item-detail.component.html</div>
<div class="t " style="left:547.5px;top:915.98px;height:20px;line-height:20px;font-size:12.5px;color:#519aba;font-family:'Liberation Sans',sans-serif;font-weight:bold;letter-spacing:-0.3px;">TS</div>
<div class="t " style="left:570px;top:914.48px;height:25px;line-height:25px;font-size:16px;color:#cccccc;font-family:'Liberation Sans',sans-serif;">item-detail.component.ts</div>
<div class="t " style="left:547.5px;top:943.52px;height:20px;line-height:20px;font-size:12.5px;color:#519aba;font-family:'Liberation Sans',sans-serif;font-weight:bold;letter-spacing:-0.3px;">TS</div>
<div class="t " style="left:570px;top:942.02px;height:25px;line-height:25px;font-size:16px;color:#cccccc;font-family:'Liberation Sans',sans-serif;">item.service.ts</div>
<div class="t " style="left:547.5px;top:971.06px;height:20px;line-height:20px;font-size:12.5px;color:#519aba;font-family:'Liberation Sans',sans-serif;font-weight:bold;letter-spacing:-0.3px;">TS</div>
<div class="t " style="left:570px;top:969.56px;height:25px;line-height:25px;font-size:16px;color:#cccccc;font-family:'Liberation Sans',sans-serif;">item.ts</div>
<svg class="a" style="left:548px;top:1002.5999999999999px;" width="16" height="14" viewBox="0 0 16 14"><path d="M5.5 2.5 L1.5 7 L5.5 11.5 M10.5 2.5 L14.5 7 L10.5 11.5" fill="none" stroke="#e37933" stroke-width="2"/></svg>
<div class="t " style="left:570px;top:997.10px;height:25px;line-height:25px;font-size:16px;color:#cccccc;font-family:'Liberation Sans',sans-serif;">items.component.html</div>
<div class="t " style="left:547.5px;top:1026.14px;height:20px;line-height:20px;font-size:12.5px;color:#519aba;font-family:'Liberation Sans',sans-serif;font-weight:bold;letter-spacing:-0.3px;">TS</div>
<div class="t " style="left:570px;top:1024.64px;height:25px;line-height:25px;font-size:16px;color:#cccccc;font-family:'Liberation Sans',sans-serif;">items.component.ts</div>
<div class="t " style="left:537.5px;top:1053.68px;height:20px;line-height:20px;font-size:12.5px;color:#519aba;font-family:'Liberation Sans',sans-serif;font-weight:bold;letter-spacing:-0.3px;">TS</div>
<div class="t " style="left:560px;top:1052.18px;height:25px;line-height:25px;font-size:16px;color:#cccccc;font-family:'Liberation Sans',sans-serif;">app-routing.module.ts</div>
<svg class="a" style="left:538px;top:1085.22px;" width="16" height="14" viewBox="0 0 16 14"><path d="M5.5 2.5 L1.5 7 L5.5 11.5 M10.5 2.5 L14.5 7 L10.5 11.5" fill="none" stroke="#e37933" stroke-width="2"/></svg>
<div class="t " style="left:560px;top:1079.72px;height:25px;line-height:25px;font-size:16px;color:#cccccc;font-family:'Liberation Sans',sans-serif;">app.component.html</div>
<div class="t " style="left:537.5px;top:1108.76px;height:20px;line-height:20px;font-size:12.5px;color:#519aba;font-family:'Liberation Sans',sans-serif;font-weight:bold;letter-spacing:-0.3px;">TS</div>
<div class="t " style="left:560px;top:1107.26px;height:25px;line-height:25px;font-size:16px;color:#cccccc;font-family:'Liberation Sans',sans-serif;">app.component.ts</div>
<div class="t " style="left:537.5px;top:1136.30px;height:20px;line-height:20px;font-size:12.5px;color:#519aba;font-family:'Liberation Sans',sans-serif;font-weight:bold;letter-spacing:-0.3px;">TS</div>
<div class="t " style="left:560px;top:1134.80px;height:25px;line-height:25px;font-size:16px;color:#cccccc;font-family:'Liberation Sans',sans-serif;">app.module.ts</div>
<div class="t " style="left:529px;top:1161.84px;height:24px;line-height:24px;font-size:15px;color:#519aba;font-family:'Liberation Sans',sans-serif;font-weight:bold;">#</div>
<div class="t " style="left:550px;top:1162.34px;height:25px;line-height:25px;font-size:16px;color:#cccccc;font-family:'Liberation Sans',sans-serif;">app.css</div>
<div class="t " style="left:527.5px;top:1191.38px;height:20px;line-height:20px;font-size:12.5px;color:#519aba;font-family:'Liberation Sans',sans-serif;font-weight:bold;letter-spacing:-0.3px;">TS</div>
<div class="t " style="left:550px;top:1189.88px;height:25px;line-height:25px;font-size:16px;color:#cccccc;font-family:'Liberation Sans',sans-serif;">main.ts</div>
<div class="t " style="left:527.5px;top:1218.92px;height:20px;line-height:20px;font-size:12.5px;color:#519aba;font-family:'Liberation Sans',sans-serif;font-weight:bold;letter-spacing:-0.3px;">TS</div>
<div class="t " style="left:550px;top:1217.42px;height:25px;line-height:25px;font-size:16px;color:#cccccc;font-family:'Liberation Sans',sans-serif;">polyfills.ts</div>
<svg class="a" style="left:517px;top:1249.46px;" width="16" height="16" viewBox="0 0 16 16"><g transform="translate(8 8)"><circle r="5.2" fill="#6d8086"/><g fill="#6d8086"><rect x="-1.6" y="-8" width="3.2" height="16"/><rect x="-1.6" y="-8" width="3.2" height="16" transform="rotate(60)"/><rect x="-1.6" y="-8" width="3.2" height="16" transform="rotate(120)"/></g><circle r="2" fill="#181818"/></g></svg>
<div class="t " style="left:540px;top:1244.96px;height:25px;line-height:25px;font-size:16px;color:#cccccc;font-family:'Liberation Sans',sans-serif;">.editorconfig</div>
<svg class="a" style="left:517px;top:1277.0px;" width="16" height="16" viewBox="0 0 16 16"><path d="M8 0.5 L15.5 8 L8 15.5 L0.5 8 Z" fill="#41535b"/><circle cx="7" cy="6" r="1.5" fill="#181818"/><path d="M7 6 V11 M7 6 L10 9" stroke="#181818" stroke-width="1.2"/></svg>
<div class="t " style="left:540px;top:1272.50px;height:25px;line-height:25px;font-size:16px;color:#cccccc;font-family:'Liberation Sans',sans-serif;">.gitignore</div>
<div class="t " style="left:517.5px;top:1301.54px;height:20px;line-height:20px;font-size:12.5px;color:#519aba;font-family:'Liberation Sans',sans-serif;font-weight:bold;letter-spacing:-0.3px;">TS</div>
<div class="t " style="left:540px;top:1300.04px;height:25px;line-height:25px;font-size:16px;color:#cccccc;font-family:'Liberation Sans',sans-serif;">nativescript.config.ts</div>
<div class="t " style="left:517px;top:1329.08px;height:20px;line-height:20px;font-size:13px;color:#cbcb41;font-family:'Liberation Sans',sans-serif;font-weight:bold;letter-spacing:-1.5px;">{ }</div>
<div class="t " style="left:540px;top:1327.58px;height:25px;line-height:25px;font-size:16px;color:#cccccc;font-family:'Liberation Sans',sans-serif;">package-lock.json</div>
<div class="t " style="left:517px;top:1356.62px;height:20px;line-height:20px;font-size:13px;color:#cbcb41;font-family:'Liberation Sans',sans-serif;font-weight:bold;letter-spacing:-1.5px;">{ }</div>
<div class="t " style="left:540px;top:1355.12px;height:25px;line-height:25px;font-size:16px;color:#cccccc;font-family:'Liberation Sans',sans-serif;">package.json</div>
<div class="a" style="left:791.5px;top:539px;width:662px;height:43px;background:#181818;"></div>
<div class="a" style="left:791.5px;top:581px;width:1322.5px;height:1px;background:#2b2b2b;"></div>
<div class="a" style="left:1007.5px;top:539px;width:1px;height:43px;background:#2b2b2b;"></div>
<div class="a" style="left:1183.5px;top:539px;width:1px;height:43px;background:#2b2b2b;"></div>
<div class="a" style="left:1184.5px;top:539px;width:150px;height:43px;background:#1f1f1f;"></div>
<div class="a" style="left:1333.5px;top:539px;width:1px;height:43px;background:#2b2b2b;"></div>
<div class="t " style="left:808.5px;top:550.00px;height:20px;line-height:20px;font-size:12.5px;color:#519aba;font-family:'Liberation Sans',sans-serif;font-weight:bold;letter-spacing:-0.3px;">TS</div>
<div class="t " style="left:832px;top:548.50px;height:25px;line-height:25px;font-size:16px;color:#9d9d9d;font-family:'Liberation Sans',sans-serif;">items.component.ts</div>
<div class="t " style="left:1025.5px;top:550.00px;height:20px;line-height:20px;font-size:12.5px;color:#519aba;font-family:'Liberation Sans',sans-serif;font-weight:bold;letter-spacing:-0.3px;">TS</div>
<div class="t " style="left:1048px;top:548.50px;height:25px;line-height:25px;font-size:16px;color:#9d9d9d;font-family:'Liberation Sans',sans-serif;">item.service.ts</div>
<div class="a" style="left:1161px;top:556px;width:10px;height:10px;background:#9d9d9d;border-radius:50%;"></div>
<div class="t " style="left:1202px;top:550.00px;height:20px;line-height:20px;font-size:12.5px;color:#519aba;font-family:'Liberation Sans',sans-serif;font-weight:bold;letter-spacing:-0.3px;">TS</div>
<div class="t " style="left:1225px;top:548.50px;height:25px;line-height:25px;font-size:16px;color:#ffffff;font-family:'Liberation Sans',sans-serif;font-style:italic;">item.ts</div>
<svg class="a" style="left:1310px;top:555px;" width="13" height="13" viewBox="0 0 13 13"><path d="M1 1 L12 12 M12 1 L1 12" stroke="#cccccc" stroke-width="1.3"/></svg>
<svg class="a" style="left:1417px;top:559px;" width="16" height="5" viewBox="0 0 16 5"><circle cx="2" cy="2.5" r="1.6" fill="#cccccc"/><circle cx="8" cy="2.5" r="1.6" fill="#cccccc"/><circle cx="14" cy="2.5" r="1.6" fill="#cccccc"/></svg>
<div class="a" style="left:791.5px;top:582px;width:662px;height:797px;background:#1f1f1f;"></div>
<div class="t " style="left:812px;top:585.00px;height:25px;line-height:25px;font-size:16px;color:#a9a9a9;font-family:'Liberation Sans',sans-serif;">MyVault</div>
<div class="t " style="left:890.5px;top:585.00px;height:25px;line-height:25px;font-size:16px;color:#a9a9a9;font-family:'Liberation Sans',sans-serif;">src</div>
<div class="t " style="left:930.5px;top:585.00px;height:25px;line-height:25px;font-size:16px;color:#a9a9a9;font-family:'Liberation Sans',sans-serif;">app</div>
<div class="t " style="left:978px;top:585.00px;height:25px;line-height:25px;font-size:16px;color:#a9a9a9;font-family:'Liberation Sans',sans-serif;">item</div>
<div class="t " style="left:1057.5px;top:585.00px;height:25px;line-height:25px;font-size:16px;color:#a9a9a9;font-family:'Liberation Sans',sans-serif;">item.ts</div>
<div class="t " style="left:1149px;top:585.00px;height:25px;line-height:25px;font-size:16px;color:#a9a9a9;font-family:'Liberation Sans',sans-serif;">Item</div>
<svg class="a" style="left:876.4px;top:590.5px;" width="9" height="15" viewBox="0 0 9 15"><path d="M1 1 L7 7.5 L1 14" fill="none" stroke="#a9a9a9" stroke-width="1.2"/></svg>
<svg class="a" style="left:917px;top:590.5px;" width="9" height="15" viewBox="0 0 9 15"><path d="M1 1 L7 7.5 L1 14" fill="none" stroke="#a9a9a9" stroke-width="1.2"/></svg>
<svg class="a" style="left:964px;top:590.5px;" width="9" height="15" viewBox="0 0 9 15"><path d="M1 1 L7 7.5 L1 14" fill="none" stroke="#a9a9a9" stroke-width="1.2"/></svg>
<svg class="a" style="left:1016.4px;top:590.5px;" width="9" height="15" viewBox="0 0 9 15"><path d="M1 1 L7 7.5 L1 14" fill="none" stroke="#a9a9a9" stroke-width="1.2"/></svg>
<svg class="a" style="left:1112px;top:590.5px;" width="9" height="15" viewBox="0 0 9 15"><path d="M1 1 L7 7.5 L1 14" fill="none" stroke="#a9a9a9" stroke-width="1.2"/></svg>
<div class="t " style="left:1034.5px;top:586.50px;height:20px;line-height:20px;font-size:12.5px;color:#519aba;font-family:'Liberation Sans',sans-serif;font-weight:bold;letter-spacing:-0.3px;">TS</div>
<svg class="a" style="left:1126px;top:591px;" width="18" height="12" viewBox="0 0 18 12"><circle cx="3" cy="6" r="2.6" fill="#75beff"/><path d="M5 6 H9" stroke="#75beff" stroke-width="1.6"/><circle cx="13" cy="6" r="4" fill="none" stroke="#75beff" stroke-width="1.7"/></svg>
<div class="a" style="left:877px;top:610.5px;width:575px;height:23.75px;border:1.5px solid #282828;border-right:none;"></div>
<div class="a" style="left:877px;top:634px;width:1px;height:71px;background:#404040;"></div>
<div class="a" style="left:1436.5px;top:610px;width:1px;height:769px;background:#2a2a2a;"></div>
<div class="a" style="left:1437px;top:610px;width:15px;height:2px;background:#5a5a5a;"></div>
<div class="t" style="left:795px;width:50px;text-align:right;top:614.02px;height:23.75px;line-height:23.75px;font:16px 'Liberation Mono',monospace;color:#cccccc">1</div>
<div class="t" style="left:877px;top:614.02px;height:23.75px;line-height:23.75px;font:16px 'Liberation Mono',monospace;color:#cccccc"><span style="color:#c586c0">export</span> <span style="color:#569cd6">interface</span> <span style="color:#4ec9b0">Item</span> <span style="color:#ffd700">{</span></div>
<div class="t" style="left:795px;width:50px;text-align:right;top:637.77px;height:23.75px;line-height:23.75px;font:16px 'Liberation Mono',monospace;color:#6e7681">2</div>
<div class="t" style="left:877px;top:637.77px;height:23.75px;line-height:23.75px;font:16px 'Liberation Mono',monospace;color:#cccccc">  <span style="color:#9cdcfe">id</span><span style="color:#cccccc">: </span><span style="color:#4ec9b0">number</span></div>
<div class="t" style="left:795px;width:50px;text-align:right;top:661.52px;height:23.75px;line-height:23.75px;font:16px 'Liberation Mono',monospace;color:#6e7681">3</div>
<div class="t" style="left:877px;top:661.52px;height:23.75px;line-height:23.75px;font:16px 'Liberation Mono',monospace;color:#cccccc">  <span style="color:#9cdcfe">name</span><span style="color:#cccccc">: </span><span style="color:#4ec9b0">string</span></div>
<div class="t" style="left:795px;width:50px;text-align:right;top:685.27px;height:23.75px;line-height:23.75px;font:16px 'Liberation Mono',monospace;color:#6e7681">4</div>
<div class="t" style="left:877px;top:685.27px;height:23.75px;line-height:23.75px;font:16px 'Liberation Mono',monospace;color:#cccccc">  <span style="color:#9cdcfe">role</span><span style="color:#cccccc">: </span><span style="color:#4ec9b0">string</span></div>
<div class="t" style="left:795px;width:50px;text-align:right;top:709.02px;height:23.75px;line-height:23.75px;font:16px 'Liberation Mono',monospace;color:#6e7681">5</div>
<div class="t" style="left:877px;top:709.02px;height:23.75px;line-height:23.75px;font:16px 'Liberation Mono',monospace;color:#cccccc"><span style="color:#ffd700">}</span></div>
<div class="t" style="left:795px;width:50px;text-align:right;top:732.77px;height:23.75px;line-height:23.75px;font:16px 'Liberation Mono',monospace;color:#6e7681">6</div>
<div class="t" style="left:877px;top:732.77px;height:23.75px;line-height:23.75px;font:16px 'Liberation Mono',monospace;color:#cccccc"></div>
<div class="a" style="left:1453.5px;top:539px;width:1px;height:840px;background:#2b2b2b;"></div>
<div class="a" style="left:1454.5px;top:539px;width:659.5px;height:43px;background:#181818;"></div>
<div class="a" style="left:1602.5px;top:539px;width:1px;height:43px;background:#2b2b2b;"></div>
<div class="a" style="left:1603.5px;top:539px;width:175px;height:43px;background:#1f1f1f;"></div>
<div class="a" style="left:1603.5px;top:539px;width:175px;height:2px;background:#0078d4;"></div>
<div class="a" style="left:1778px;top:539px;width:1px;height:43px;background:#2b2b2b;"></div>
<div class="t " style="left:1471px;top:550.00px;height:20px;line-height:20px;font-size:12.5px;color:#519aba;font-family:'Liberation Sans',sans-serif;font-weight:bold;letter-spacing:-0.3px;">TS</div>
<div class="t " style="left:1494px;top:548.50px;height:25px;line-height:25px;font-size:16px;color:#9d9d9d;font-family:'Liberation Sans',sans-serif;">item.ts</div>
<div class="t " style="left:1620.5px;top:550.00px;height:20px;line-height:20px;font-size:12.5px;color:#519aba;font-family:'Liberation Sans',sans-serif;font-weight:bold;letter-spacing:-0.3px;">TS</div>
<div class="t " style="left:1643.5px;top:548.50px;height:25px;line-height:25px;font-size:16px;color:#ffffff;font-family:'Liberation Sans',sans-serif;">item.service.ts</div>
<div class="a" style="left:1756px;top:556px;width:10px;height:10px;background:#ffffff;border-radius:50%;"></div>
<div class="t " style="left:2012px;top:548.50px;height:23px;line-height:23px;font-size:14.5px;color:#cccccc;font-family:'Liberation Sans',sans-serif;transform:scaleX(0.62);transform-origin:0 0;letter-spacing:0.5px;">HEX</div>
<svg class="a" style="left:2047px;top:552px;" width="17" height="17" viewBox="0 0 17 17"><rect x="0.8" y="0.8" width="15.4" height="15.4" rx="1.5" fill="none" stroke="#cccccc" stroke-width="1.4"/><path d="M8.5 1 V16" stroke="#cccccc" stroke-width="1.4"/></svg>
<svg class="a" style="left:2079px;top:558px;" width="16" height="5" viewBox="0 0 16 5"><circle cx="2" cy="2.5" r="1.6" fill="#cccccc"/><circle cx="8" cy="2.5" r="1.6" fill="#cccccc"/><circle cx="14" cy="2.5" r="1.6" fill="#cccccc"/></svg>
<div class="a" style="left:1454.5px;top:582px;width:658.5px;height:797px;background:#1f1f1f;"></div>
<div class="t " style="left:1473.5px;top:585.00px;height:25px;line-height:25px;font-size:16px;color:#a9a9a9;font-family:'Liberation Sans',sans-serif;">MyVault</div>
<div class="t " style="left:1551px;top:585.00px;height:25px;line-height:25px;font-size:16px;color:#a9a9a9;font-family:'Liberation Sans',sans-serif;">src</div>
<div class="t " style="left:1591px;top:585.00px;height:25px;line-height:25px;font-size:16px;color:#a9a9a9;font-family:'Liberation Sans',sans-serif;">app</div>
<div class="t " style="left:1638.5px;top:585.00px;height:25px;line-height:25px;font-size:16px;color:#a9a9a9;font-family:'Liberation Sans',sans-serif;">item</div>
<div class="t " style="left:1719px;top:585.00px;height:25px;line-height:25px;font-size:16px;color:#a9a9a9;font-family:'Liberation Sans',sans-serif;">item.service.ts</div>
<div class="t " style="left:1862.4px;top:585.00px;height:25px;line-height:25px;font-size:16px;color:#a9a9a9;font-family:'Liberation Sans',sans-serif;">ItemService</div>
<div class="t " style="left:1989.6px;top:585.00px;height:25px;line-height:25px;font-size:16px;color:#a9a9a9;font-family:'Liberation Sans',sans-serif;">items</div>
<svg class="a" style="left:1538.7px;top:590.5px;" width="9" height="15" viewBox="0 0 9 15"><path d="M1 1 L7 7.5 L1 14" fill="none" stroke="#a9a9a9" stroke-width="1.2"/></svg>
<svg class="a" style="left:1578.7px;top:590.5px;" width="9" height="15" viewBox="0 0 9 15"><path d="M1 1 L7 7.5 L1 14" fill="none" stroke="#a9a9a9" stroke-width="1.2"/></svg>
<svg class="a" style="left:1623.7px;top:590.5px;" width="9" height="15" viewBox="0 0 9 15"><path d="M1 1 L7 7.5 L1 14" fill="none" stroke="#a9a9a9" stroke-width="1.2"/></svg>
<svg class="a" style="left:1677.5px;top:590.5px;" width="9" height="15" viewBox="0 0 9 15"><path d="M1 1 L7 7.5 L1 14" fill="none" stroke="#a9a9a9" stroke-width="1.2"/></svg>
<svg class="a" style="left:1826.3px;top:590.5px;" width="9" height="15" viewBox="0 0 9 15"><path d="M1 1 L7 7.5 L1 14" fill="none" stroke="#a9a9a9" stroke-width="1.2"/></svg>
<svg class="a" style="left:1952.7px;top:590.5px;" width="9" height="15" viewBox="0 0 9 15"><path d="M1 1 L7 7.5 L1 14" fill="none" stroke="#a9a9a9" stroke-width="1.2"/></svg>
<div class="t " style="left:1693.5px;top:586.50px;height:20px;line-height:20px;font-size:12.5px;color:#519aba;font-family:'Liberation Sans',sans-serif;font-weight:bold;letter-spacing:-0.3px;">TS</div>
<svg class="a" style="left:1840px;top:588px;" width="18" height="19" viewBox="0 0 18 19"><path d="M2 5 L6 1.5 L9 4.5 L5 8 Z M9 9 L13 6 L16.5 9.5 L12.5 13 Z M5 13 L9 10 L12.5 13.5 L8.5 17 Z M6 5 V13 M6 9 H9" fill="none" stroke="#ee9d28" stroke-width="1.5" stroke-linejoin="round"/></svg>
<svg class="a" style="left:1966px;top:589px;" width="19" height="18" viewBox="0 0 19 18"><path d="M1.5 16.5 L9 9 M9 9 Q7 3 12 1.5 L10.5 4.5 L13.5 7.5 L16.5 6 Q15 11 9 9" fill="none" stroke="#75beff" stroke-width="1.5" stroke-linejoin="round"/></svg>
<div class="a" style="left:1538px;top:739.5px;width:1px;height:23.75px;background:#404040;"></div>
<div class="a" style="left:1538px;top:799px;width:1px;height:486px;background:#404040;"></div>
<div class="a" style="left:1557px;top:822.5px;width:1px;height:214px;background:#5a5a5a;"></div>
<div class="a" style="left:1557px;top:1132px;width:1px;height:24px;background:#404040;"></div>
<div class="a" style="left:1557px;top:1227px;width:1px;height:24px;background:#404040;"></div>
<div class="a" style="left:1538px;top:1037.5px;width:576px;height:23.75px;border-top:1.5px solid #282828;border-bottom:1.5px solid #282828;"></div>
<div class="a" style="left:1856px;top:800px;width:10.5px;height:24px;background:#1b231b;border:1px solid #8a8a8a;"></div>
<div class="a" style="left:1557px;top:1061px;width:10.5px;height:24px;background:#1b231b;border:1px solid #8a8a8a;"></div>
<div class="t" style="left:1455px;width:50px;text-align:right;top:614.02px;height:23.75px;line-height:23.75px;font:16px 'Liberation Mono',monospace;color:#6e7681">1</div>
<div class="t" style="left:1538px;top:614.02px;height:23.75px;line-height:23.75px;font:16px 'Liberation Mono',monospace;color:#cccccc"><span style="color:#c586c0">import</span> <span style="color:#ffd700">{</span> <span style="color:#9cdcfe">Injectable</span> <span style="color:#ffd700">}</span> <span style="color:#c586c0">from</span> <span style="color:#ce9178">'@angular/core'</span></div>
<div class="t" style="left:1455px;width:50px;text-align:right;top:637.77px;height:23.75px;line-height:23.75px;font:16px 'Liberation Mono',monospace;color:#6e7681">2</div>
<div class="t" style="left:1538px;top:637.77px;height:23.75px;line-height:23.75px;font:16px 'Liberation Mono',monospace;color:#cccccc"></div>
<div class="t" style="left:1455px;width:50px;text-align:right;top:661.52px;height:23.75px;line-height:23.75px;font:16px 'Liberation Mono',monospace;color:#6e7681">3</div>
<div class="t" style="left:1538px;top:661.52px;height:23.75px;line-height:23.75px;font:16px 'Liberation Mono',monospace;color:#cccccc"><span style="color:#c586c0">import</span> <span style="color:#ffd700">{</span> <span style="color:#9cdcfe">Item</span> <span style="color:#ffd700">}</span> <span style="color:#c586c0">from</span> <span style="color:#ce9178">'./item'</span></div>
<div class="t" style="left:1455px;width:50px;text-align:right;top:685.27px;height:23.75px;line-height:23.75px;font:16px 'Liberation Mono',monospace;color:#6e7681">4</div>
<div class="t" style="left:1538px;top:685.27px;height:23.75px;line-height:23.75px;font:16px 'Liberation Mono',monospace;color:#cccccc"></div>
<div class="t" style="left:1455px;width:50px;text-align:right;top:709.02px;height:23.75px;line-height:23.75px;font:16px 'Liberation Mono',monospace;color:#6e7681">5</div>
<div class="t" style="left:1538px;top:709.02px;height:23.75px;line-height:23.75px;font:16px 'Liberation Mono',monospace;color:#cccccc"><span style="color:#cccccc">@</span><span style="color:#4ec9b0">Injectable</span><span style="color:#ffd700">(</span><span style="color:#da70d6">{</span></div>
<div class="t" style="left:1455px;width:50px;text-align:right;top:732.77px;height:23.75px;line-height:23.75px;font:16px 'Liberation Mono',monospace;color:#6e7681">6</div>
<div class="t" style="left:1538px;top:732.77px;height:23.75px;line-height:23.75px;font:16px 'Liberation Mono',monospace;color:#cccccc">  <span style="color:#9cdcfe">providedIn</span><span style="color:#cccccc">: </span><span style="color:#ce9178">'root'</span><span style="color:#cccccc">,</span></div>
<div class="t" style="left:1455px;width:50px;text-align:right;top:756.52px;height:23.75px;line-height:23.75px;font:16px 'Liberation Mono',monospace;color:#6e7681">7</div>
<div class="t" style="left:1538px;top:756.52px;height:23.75px;line-height:23.75px;font:16px 'Liberation Mono',monospace;color:#cccccc"><span style="color:#da70d6">}</span><span style="color:#ffd700">)</span></div>
<div class="t" style="left:1455px;width:50px;text-align:right;top:780.27px;height:23.75px;line-height:23.75px;font:16px 'Liberation Mono',monospace;color:#6e7681">8</div>
<div class="t" style="left:1538px;top:780.27px;height:23.75px;line-height:23.75px;font:16px 'Liberation Mono',monospace;color:#cccccc"><span style="color:#c586c0">export</span> <span style="color:#569cd6">class</span> <span style="color:#4ec9b0">ItemService</span> <span style="color:#ffd700">{</span></div>
<div class="t" style="left:1455px;width:50px;text-align:right;top:804.02px;height:23.75px;line-height:23.75px;font:16px 'Liberation Mono',monospace;color:#6e7681">9</div>
<div class="t" style="left:1538px;top:804.02px;height:23.75px;line-height:23.75px;font:16px 'Liberation Mono',monospace;color:#cccccc">  <span style="color:#569cd6">private</span> <span style="color:#9cdcfe">items</span> <span style="color:#cccccc">=</span> <span style="color:#569cd6">new</span> <span style="color:#4ec9b0">Array</span><span style="color:#da70d6">&lt;</span><span style="color:#4ec9b0">Item</span><span style="color:#da70d6">&gt;</span><span style="color:#da70d6">(</span></div>
<div class="t" style="left:1455px;width:50px;text-align:right;top:827.77px;height:23.75px;line-height:23.75px;font:16px 'Liberation Mono',monospace;color:#6e7681">10</div>
<div class="t" style="left:1538px;top:827.77px;height:23.75px;line-height:23.75px;font:16px 'Liberation Mono',monospace;color:#cccccc">    <span style="color:#179fff">{</span> <span style="color:#9cdcfe">id</span><span style="color:#cccccc">: </span><span style="color:#b5cea8">1</span><span style="color:#cccccc">, </span><span style="color:#9cdcfe">name</span><span style="color:#cccccc">: </span><span style="color:#ce9178">'Ter Stegen'</span><span style="color:#cccccc">, </span><span style="color:#9cdcfe">role</span><span style="color:#cccccc">: </span><span style="color:#ce9178">'Goalkeeper'</span> <span style="color:#179fff">}</span><span style="color:#cccccc">,</span></div>
<div class="t" style="left:1455px;width:50px;text-align:right;top:851.52px;height:23.75px;line-height:23.75px;font:16px 'Liberation Mono',monospace;color:#6e7681">11</div>
<div class="t" style="left:1538px;top:851.52px;height:23.75px;line-height:23.75px;font:16px 'Liberation Mono',monospace;color:#cccccc">    <span style="color:#179fff">{</span> <span style="color:#9cdcfe">id</span><span style="color:#cccccc">: </span><span style="color:#b5cea8">3</span><span style="color:#cccccc">, </span><span style="color:#9cdcfe">name</span><span style="color:#cccccc">: </span><span style="color:#ce9178">'Piqué'</span><span style="color:#cccccc">, </span><span style="color:#9cdcfe">role</span><span style="color:#cccccc">: </span><span style="color:#ce9178">'Defender'</span> <span style="color:#179fff">}</span><span style="color:#cccccc">,</span></div>
<div class="t" style="left:1455px;width:50px;text-align:right;top:875.27px;height:23.75px;line-height:23.75px;font:16px 'Liberation Mono',monospace;color:#6e7681">12</div>
<div class="t" style="left:1538px;top:875.27px;height:23.75px;line-height:23.75px;font:16px 'Liberation Mono',monospace;color:#cccccc">    <span style="color:#179fff">{</span> <span style="color:#9cdcfe">id</span><span style="color:#cccccc">: </span><span style="color:#b5cea8">4</span><span style="color:#cccccc">, </span><span style="color:#9cdcfe">name</span><span style="color:#cccccc">: </span><span style="color:#ce9178">'I. Rakitic'</span><span style="color:#cccccc">, </span><span style="color:#9cdcfe">role</span><span style="color:#cccccc">: </span><span style="color:#ce9178">'Midfielder'</span> <span style="color:#179fff">}</span><span style="color:#cccccc">,</span></div>
<div class="t" style="left:1455px;width:50px;text-align:right;top:899.02px;height:23.75px;line-height:23.75px;font:16px 'Liberation Mono',monospace;color:#6e7681">13</div>
<div class="t" style="left:1538px;top:899.02px;height:23.75px;line-height:23.75px;font:16px 'Liberation Mono',monospace;color:#cccccc">    <span style="color:#179fff">{</span> <span style="color:#9cdcfe">id</span><span style="color:#cccccc">: </span><span style="color:#b5cea8">5</span><span style="color:#cccccc">, </span><span style="color:#9cdcfe">name</span><span style="color:#cccccc">: </span><span style="color:#ce9178">'Sergio'</span><span style="color:#cccccc">, </span><span style="color:#9cdcfe">role</span><span style="color:#cccccc">: </span><span style="color:#ce9178">'Midfielder'</span> <span style="color:#179fff">}</span><span style="color:#cccccc">,</span></div>
<div class="t" style="left:1455px;width:50px;text-align:right;top:922.77px;height:23.75px;line-height:23.75px;font:16px 'Liberation Mono',monospace;color:#6e7681">14</div>
<div class="t" style="left:1538px;top:922.77px;height:23.75px;line-height:23.75px;font:16px 'Liberation Mono',monospace;color:#cccccc">    <span style="color:#179fff">{</span> <span style="color:#9cdcfe">id</span><span style="color:#cccccc">: </span><span style="color:#b5cea8">6</span><span style="color:#cccccc">, </span><span style="color:#9cdcfe">name</span><span style="color:#cccccc">: </span><span style="color:#ce9178">'Denis Suárez'</span><span style="color:#cccccc">, </span><span style="color:#9cdcfe">role</span><span style="color:#cccccc">: </span><span style="color:#ce9178">'Midfielder'</span> <span style="color:#179fff">}</span><span style="color:#cccccc">,</span></div>
<div class="t" style="left:1455px;width:50px;text-align:right;top:946.52px;height:23.75px;line-height:23.75px;font:16px 'Liberation Mono',monospace;color:#6e7681">15</div>
<div class="t" style="left:1538px;top:946.52px;height:23.75px;line-height:23.75px;font:16px 'Liberation Mono',monospace;color:#cccccc">    <span style="color:#179fff">{</span> <span style="color:#9cdcfe">id</span><span style="color:#cccccc">: </span><span style="color:#b5cea8">7</span><span style="color:#cccccc">, </span><span style="color:#9cdcfe">name</span><span style="color:#cccccc">: </span><span style="color:#ce9178">'Arda'</span><span style="color:#cccccc">, </span><span style="color:#9cdcfe">role</span><span style="color:#cccccc">: </span><span style="color:#ce9178">'Midfielder'</span> <span style="color:#179fff">}</span><span style="color:#cccccc">,</span></div>
<div class="t" style="left:1455px;width:50px;text-align:right;top:970.27px;height:23.75px;line-height:23.75px;font:16px 'Liberation Mono',monospace;color:#6e7681">16</div>
<div class="t" style="left:1538px;top:970.27px;height:23.75px;line-height:23.75px;font:16px 'Liberation Mono',monospace;color:#cccccc">    <span style="color:#179fff">{</span> <span style="color:#9cdcfe">id</span><span style="color:#cccccc">: </span><span style="color:#b5cea8">8</span><span style="color:#cccccc">, </span><span style="color:#9cdcfe">name</span><span style="color:#cccccc">: </span><span style="color:#ce9178">'A. Iniesta'</span><span style="color:#cccccc">, </span><span style="color:#9cdcfe">role</span><span style="color:#cccccc">: </span><span style="color:#ce9178">'Midfielder'</span> <span style="color:#179fff">}</span><span style="color:#cccccc">,</span></div>
<div class="t" style="left:1455px;width:50px;text-align:right;top:994.02px;height:23.75px;line-height:23.75px;font:16px 'Liberation Mono',monospace;color:#6e7681">17</div>
<div class="t" style="left:1538px;top:994.02px;height:23.75px;line-height:23.75px;font:16px 'Liberation Mono',monospace;color:#cccccc">    <span style="color:#179fff">{</span> <span style="color:#9cdcfe">id</span><span style="color:#cccccc">: </span><span style="color:#b5cea8">9</span><span style="color:#cccccc">, </span><span style="color:#9cdcfe">name</span><span style="color:#cccccc">: </span><span style="color:#ce9178">'Suárez'</span><span style="color:#cccccc">, </span><span style="color:#9cdcfe">role</span><span style="color:#cccccc">: </span><span style="color:#ce9178">'Forward'</span> <span style="color:#179fff">}</span><span style="color:#cccccc">,</span></div>
<div class="t" style="left:1455px;width:50px;text-align:right;top:1017.78px;height:23.75px;line-height:23.75px;font:16px 'Liberation Mono',monospace;color:#6e7681">18</div>
<div class="t" style="left:1538px;top:1017.78px;height:23.75px;line-height:23.75px;font:16px 'Liberation Mono',monospace;color:#cccccc">    <span style="color:#179fff">{</span> <span style="color:#9cdcfe">id</span><span style="color:#cccccc">: </span><span style="color:#b5cea8">10</span><span style="color:#cccccc">, </span><span style="color:#9cdcfe">name</span><span style="color:#cccccc">: </span><span style="color:#ce9178">'Messi'</span><span style="color:#cccccc">, </span><span style="color:#9cdcfe">role</span><span style="color:#cccccc">: </span><span style="color:#ce9178">'Forward'</span> <span style="color:#179fff">}</span><span style="color:#cccccc">,</span></div>
<div class="t" style="left:1455px;width:50px;text-align:right;top:1041.53px;height:23.75px;line-height:23.75px;font:16px 'Liberation Mono',monospace;color:#cccccc">19</div>
<div class="t" style="left:1538px;top:1041.53px;height:23.75px;line-height:23.75px;font:16px 'Liberation Mono',monospace;color:#cccccc"></div>
<div class="t" style="left:1455px;width:50px;text-align:right;top:1065.28px;height:23.75px;line-height:23.75px;font:16px 'Liberation Mono',monospace;color:#6e7681">20</div>
<div class="t" style="left:1538px;top:1065.28px;height:23.75px;line-height:23.75px;font:16px 'Liberation Mono',monospace;color:#cccccc">  <span style="color:#da70d6">)</span></div>
<div class="t" style="left:1455px;width:50px;text-align:right;top:1089.03px;height:23.75px;line-height:23.75px;font:16px 'Liberation Mono',monospace;color:#6e7681">21</div>
<div class="t" style="left:1538px;top:1089.03px;height:23.75px;line-height:23.75px;font:16px 'Liberation Mono',monospace;color:#cccccc"></div>
<div class="t" style="left:1455px;width:50px;text-align:right;top:1112.78px;height:23.75px;line-height:23.75px;font:16px 'Liberation Mono',monospace;color:#6e7681">22</div>
<div class="t" style="left:1538px;top:1112.78px;height:23.75px;line-height:23.75px;font:16px 'Liberation Mono',monospace;color:#cccccc">  <span style="color:#dcdcaa">getItems</span><span style="color:#da70d6">(</span><span style="color:#da70d6">)</span><span style="color:#cccccc">: </span><span style="color:#4ec9b0">Array</span><span style="color:#da70d6">&lt;</span><span style="color:#4ec9b0">Item</span><span style="color:#da70d6">&gt;</span> <span style="color:#da70d6">{</span></div>
<div class="t" style="left:1455px;width:50px;text-align:right;top:1136.53px;height:23.75px;line-height:23.75px;font:16px 'Liberation Mono',monospace;color:#6e7681">23</div>
<div class="t" style="left:1538px;top:1136.53px;height:23.75px;line-height:23.75px;font:16px 'Liberation Mono',monospace;color:#cccccc">    <span style="color:#c586c0">return</span> <span style="color:#569cd6">this</span><span style="color:#cccccc">.</span><span style="color:#9cdcfe">items</span></div>
<div class="t" style="left:1455px;width:50px;text-align:right;top:1160.28px;height:23.75px;line-height:23.75px;font:16px 'Liberation Mono',monospace;color:#6e7681">24</div>
<div class="t" style="left:1538px;top:1160.28px;height:23.75px;line-height:23.75px;font:16px 'Liberation Mono',monospace;color:#cccccc">  <span style="color:#da70d6">}</span></div>
<div class="t" style="left:1455px;width:50px;text-align:right;top:1184.03px;height:23.75px;line-height:23.75px;font:16px 'Liberation Mono',monospace;color:#6e7681">25</div>
<div class="t" style="left:1538px;top:1184.03px;height:23.75px;line-height:23.75px;font:16px 'Liberation Mono',monospace;color:#cccccc"></div>
<div class="t" style="left:1455px;width:50px;text-align:right;top:1207.78px;height:23.75px;line-height:23.75px;font:16px 'Liberation Mono',monospace;color:#6e7681">26</div>
<div class="t" style="left:1538px;top:1207.78px;height:23.75px;line-height:23.75px;font:16px 'Liberation Mono',monospace;color:#cccccc">  <span style="color:#dcdcaa">getItem</span><span style="color:#da70d6">(</span><span style="color:#9cdcfe">id</span><span style="color:#cccccc">: </span><span style="color:#4ec9b0">number</span><span style="color:#da70d6">)</span><span style="color:#cccccc">: </span><span style="color:#4ec9b0">Item</span> <span style="color:#da70d6">{</span></div>
<div class="t" style="left:1455px;width:50px;text-align:right;top:1231.53px;height:23.75px;line-height:23.75px;font:16px 'Liberation Mono',monospace;color:#6e7681">27</div>
<div class="t" style="left:1538px;top:1231.53px;height:23.75px;line-height:23.75px;font:16px 'Liberation Mono',monospace;color:#cccccc">    <span style="color:#c586c0">return</span> <span style="color:#569cd6">this</span><span style="color:#cccccc">.</span><span style="color:#9cdcfe">items</span><span style="color:#cccccc">.</span><span style="color:#dcdcaa">filter</span><span style="color:#179fff">(</span><span style="color:#ffd700">(</span><span style="color:#9cdcfe">item</span><span style="color:#ffd700">)</span> <span style="color:#569cd6">=&gt;</span> <span style="color:#9cdcfe">item</span><span style="color:#cccccc">.</span><span style="color:#9cdcfe">id</span> <span style="color:#cccccc">===</span> <span style="color:#9cdcfe">id</span><span style="color:#179fff">)</span><span style="color:#179fff">[</span><span style="color:#b5cea8">0</span><span style="color:#179fff">]</span></div>
<div class="t" style="left:1455px;width:50px;text-align:right;top:1255.28px;height:23.75px;line-height:23.75px;font:16px 'Liberation Mono',monospace;color:#6e7681">28</div>
<div class="t" style="left:1538px;top:1255.28px;height:23.75px;line-height:23.75px;font:16px 'Liberation Mono',monospace;color:#cccccc">  <span style="color:#da70d6">}</span></div>
<div class="t" style="left:1455px;width:50px;text-align:right;top:1279.03px;height:23.75px;line-height:23.75px;font:16px 'Liberation Mono',monospace;color:#6e7681">29</div>
<div class="t" style="left:1538px;top:1279.03px;height:23.75px;line-height:23.75px;font:16px 'Liberation Mono',monospace;color:#cccccc"><span style="color:#ffd700">}</span></div>
<div class="t" style="left:1455px;width:50px;text-align:right;top:1302.78px;height:23.75px;line-height:23.75px;font:16px 'Liberation Mono',monospace;color:#6e7681">30</div>
<div class="t" style="left:1538px;top:1302.78px;height:23.75px;line-height:23.75px;font:16px 'Liberation Mono',monospace;color:#cccccc"></div>
<svg class="a" style="left:1512px;top:1038px;" width="5" height="23" viewBox="0 0 5 23"><path d="M0 4 L5 0 M0 9 L5 5 M0 14 L5 10 M0 19 L5 15 M0 23 L5 20" stroke="#2c84d8" stroke-width="1.3"/></svg>
<div class="a" style="left:2098px;top:610px;width:16px;height:553px;background:#424242;opacity:0.85;"></div>
<div class="a" style="left:2098px;top:856px;width:16px;height:1.5px;background:#9a9a9a;"></div>
<div class="a" style="left:2098px;top:858px;width:5px;height:12px;background:#2c6bb0;"></div>
<div class="a" style="left:0px;top:1380px;width:2560px;height:2px;background:#e4e4e4;"></div>
<svg class="a" style="left:1852px;top:1331px;" width="12" height="26" viewBox="0 0 12 26"><path d="M2 1 H10 M6 1 V25 M2 25 H10" stroke="#000" stroke-width="3"/><path d="M2 1 H10 M6 1 V25 M2 25 H10" stroke="#fff" stroke-width="1.3"/></svg>
</body></html>
